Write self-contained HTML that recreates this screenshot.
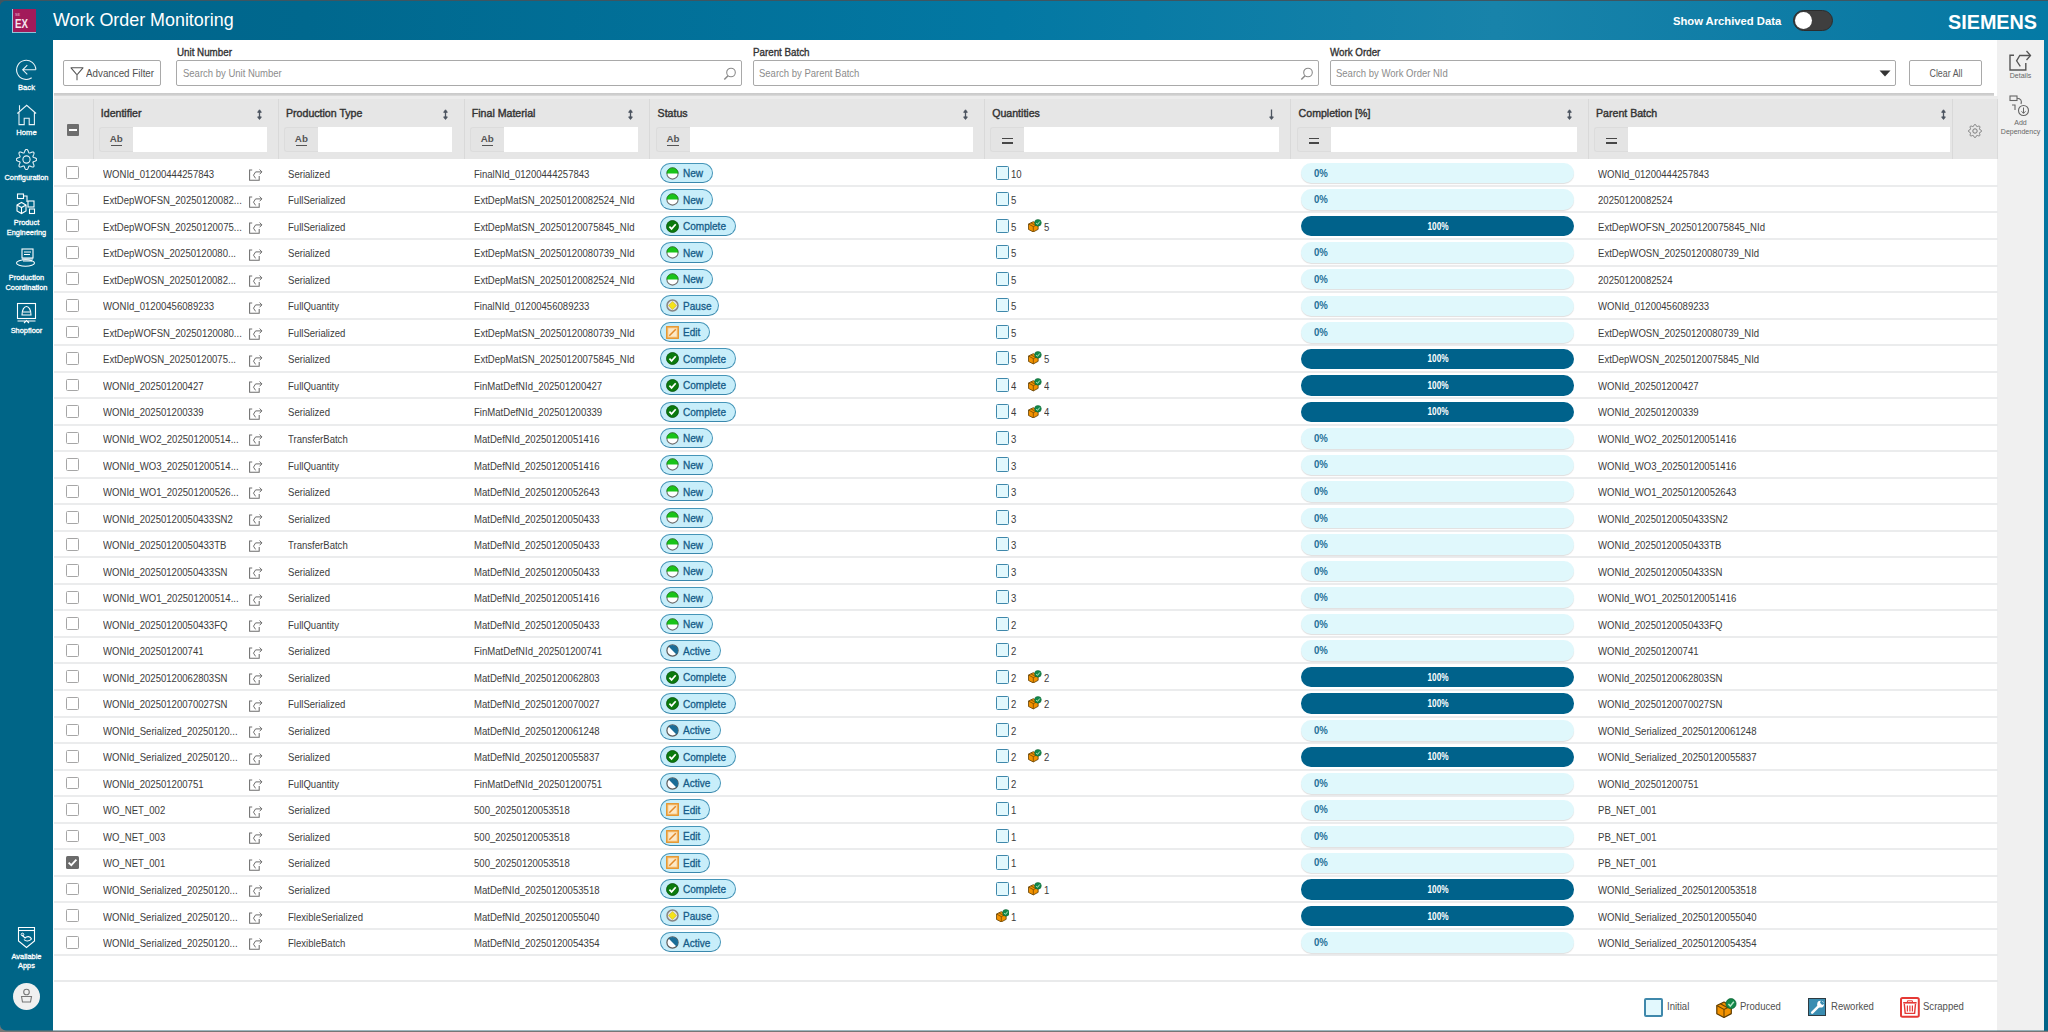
<!DOCTYPE html><html><head><meta charset="utf-8"><title>Work Order Monitoring</title><style>
*{margin:0;padding:0;box-sizing:border-box}
html,body{width:2048px;height:1032px;overflow:hidden;background:linear-gradient(180deg,#3f5560 0px,#3f5560 3px,#767676 1020px);font-family:"Liberation Sans", sans-serif}
.a{position:absolute;display:block}
.t{position:absolute;white-space:nowrap;line-height:1.117;font-family:"Liberation Sans", sans-serif}
#app{position:absolute;left:0;top:0;width:2048px;height:1032px;background:#006587;clip-path:inset(1px 0 1.5px 0 round 6px 0 0 6px);overflow:hidden}
</style></head><body><div id="app"><div class="a" style="left:0.00px;top:0.00px;width:2048.00px;height:40.30px;background:linear-gradient(90deg,#00648b 0%,#00688e 15%,#0378a3 49%,#1883aa 73%,#0b7aa4 92%,#047aa5 100%)"></div><div class="a" style="left:12.20px;top:9.20px;width:23.60px;height:24.20px;background:#a21a5a;border-left:1.2px solid #9ccbe0;border-bottom:1.2px solid #8fc2d8"></div><div class="t" style="left:15.20px;top:17.02px;font-size:12.8px;font-weight:700;color:#f6e6ee;transform:scaleX(0.76);transform-origin:0 0;">EX</div><div class="t" style="left:15.00px;top:13.16px;font-size:3.8px;font-weight:700;color:#d890b0;">SE</div><div class="t" style="left:53.00px;top:10.10px;font-size:17.9px;font-weight:400;color:#ffffff;">Work Order Monitoring</div><div class="t" style="left:1672.90px;top:15.42px;font-size:11.25px;font-weight:700;color:#ffffff;">Show Archived Data</div><div class="a" style="left:1792.60px;top:10.40px;width:40.00px;height:21.00px;background:#3f3f3f;border-radius:11px;border:1px solid #2c2c2c"></div><div class="a" style="left:1794.60px;top:12.40px;width:17.00px;height:17.00px;background:#ffffff;border-radius:50%"></div><div class="t" style="left:1948.00px;top:11.48px;font-size:19.8px;font-weight:700;color:#ffffff;">SIEMENS</div><div class="a" style="left:53.00px;top:40.30px;width:1944.00px;height:991.00px;background:#ffffff"></div><div class="a" style="left:1997.00px;top:40.30px;width:46.60px;height:991.00px;background:#f0f0f0"></div><div class="a" style="left:2043.60px;top:40.30px;width:4.40px;height:991.00px;background:linear-gradient(180deg,#0479a6 0%,#037096 45%,#006387 100%)"></div><svg class="a" style="left:16.00px;top:59.00px;" width="21" height="21" viewBox="0 0 21 21"><path d="M19.8 10.8 A9.6 9.6 0 1 0 15.7 18.7" fill="none" stroke="#e8f2f6" stroke-width="1.1"/><path d="M6.7 10.8 H19.8 M11.3 6.2 L6.7 10.8 L11.3 15.4" fill="none" stroke="#e8f2f6" stroke-width="1.1"/></svg><div class="t" style="left:-3.50px;width:60px;text-align:center;top:83.82px;font-size:7.6000000000000005px;font-weight:400;color:#ffffff;-webkit-text-stroke:0.3px #ffffff">Back</div><svg class="a" style="left:16.00px;top:104.00px;" width="21" height="22" viewBox="0 0 21 22"><path d="M1.3 9.5 L10.7 1.3 L20.1 9.5 M3 8 V20.6 H8.2 V14.2 H13.2 V20.6 H18.4 V8" fill="none" stroke="#e8f2f6" stroke-width="1.1"/><path d="M3.5 1.2 V6.5" stroke="#e8f2f6" stroke-width="1.1"/></svg><div class="t" style="left:-3.50px;width:60px;text-align:center;top:129.02px;font-size:7.6000000000000005px;font-weight:400;color:#ffffff;-webkit-text-stroke:0.3px #ffffff">Home</div><svg class="a" style="left:16.00px;top:149.40px;" width="21" height="21" viewBox="0 0 21 21"><polygon points="20.70,10.50 20.55,11.03 20.12,11.51 19.48,11.92 18.75,12.25 18.03,12.52 17.45,12.76 17.07,13.02 16.93,13.36 17.01,13.82 17.25,14.40 17.57,15.09 17.86,15.85 18.02,16.59 17.98,17.23 17.71,17.71 17.23,17.98 16.59,18.02 15.85,17.86 15.09,17.57 14.40,17.25 13.82,17.01 13.36,16.93 13.02,17.07 12.76,17.45 12.52,18.03 12.25,18.75 11.92,19.48 11.51,20.12 11.03,20.55 10.50,20.70 9.97,20.55 9.49,20.12 9.08,19.48 8.75,18.75 8.48,18.03 8.24,17.45 7.98,17.07 7.64,16.93 7.18,17.01 6.60,17.25 5.91,17.57 5.15,17.86 4.41,18.02 3.77,17.98 3.29,17.71 3.02,17.23 2.98,16.59 3.14,15.85 3.43,15.09 3.75,14.40 3.99,13.82 4.07,13.36 3.93,13.02 3.55,12.76 2.97,12.52 2.25,12.25 1.52,11.92 0.88,11.51 0.45,11.03 0.30,10.50 0.45,9.97 0.88,9.49 1.52,9.08 2.25,8.75 2.97,8.48 3.55,8.24 3.93,7.98 4.07,7.64 3.99,7.18 3.75,6.60 3.43,5.91 3.14,5.15 2.98,4.41 3.02,3.77 3.29,3.29 3.77,3.02 4.41,2.98 5.15,3.14 5.91,3.43 6.60,3.75 7.18,3.99 7.64,4.07 7.98,3.93 8.24,3.55 8.48,2.97 8.75,2.25 9.08,1.52 9.49,0.88 9.97,0.45 10.50,0.30 11.03,0.45 11.51,0.88 11.92,1.52 12.25,2.25 12.52,2.97 12.76,3.55 13.02,3.93 13.36,4.07 13.82,3.99 14.40,3.75 15.09,3.43 15.85,3.14 16.59,2.98 17.23,3.02 17.71,3.29 17.98,3.77 18.02,4.41 17.86,5.15 17.57,5.91 17.25,6.60 17.01,7.18 16.93,7.64 17.07,7.98 17.45,8.24 18.03,8.48 18.75,8.75 19.48,9.08 20.12,9.49 20.55,9.97" fill="none" stroke="#e8f2f6" stroke-width="1.1" stroke-linejoin="round"/><circle cx="10.5" cy="10.5" r="3.6" fill="none" stroke="#e8f2f6" stroke-width="1.1"/></svg><div class="t" style="left:-3.50px;width:60px;text-align:center;top:174.00px;font-size:7.4px;font-weight:400;color:#ffffff;-webkit-text-stroke:0.3px #ffffff">Configuration</div><svg class="a" style="left:15.00px;top:193.00px;" width="22" height="22" viewBox="0 0 22 22"><rect x="2.5" y="1" width="6" height="4.5" fill="none" stroke="#fff" stroke-width="1.1"/><path d="M8.5 3 H12 V9" fill="none" stroke="#fff" stroke-width="1.1"/><path d="M2 12 L6.5 9.5 L11 12 V18 L6.5 20.5 L2 18 Z M2 12 L6.5 14.5 L11 12 M6.5 14.5 V20.5" fill="none" stroke="#fff" stroke-width="1.1"/><rect x="13" y="8" width="6" height="6" fill="none" stroke="#fff" stroke-width="1.1"/><rect x="14.5" y="16" width="5" height="4.5" fill="none" stroke="#fff" stroke-width="1.1"/></svg><div class="t" style="left:-3.50px;width:60px;text-align:center;top:218.80px;font-size:7.4px;font-weight:400;color:#ffffff;-webkit-text-stroke:0.3px #ffffff">Product</div><div class="t" style="left:-3.50px;width:60px;text-align:center;top:228.90px;font-size:7.4px;font-weight:400;color:#ffffff;-webkit-text-stroke:0.3px #ffffff">Engineering</div><svg class="a" style="left:15.00px;top:248.00px;" width="22" height="20" viewBox="0 0 22 20"><rect x="7" y="1" width="11" height="9" fill="none" stroke="#fff" stroke-width="1.1"/><path d="M9 4 H16 M9 6.5 H15" stroke="#fff" stroke-width="1"/><ellipse cx="10.5" cy="15" rx="9" ry="3.2" fill="none" stroke="#fff" stroke-width="1.1"/><path d="M7 11 H18 M8 13 H17" stroke="#fff" stroke-width="1.1"/></svg><div class="t" style="left:-3.50px;width:60px;text-align:center;top:273.80px;font-size:7.4px;font-weight:400;color:#ffffff;-webkit-text-stroke:0.3px #ffffff">Production</div><div class="t" style="left:-3.50px;width:60px;text-align:center;top:283.90px;font-size:7.4px;font-weight:400;color:#ffffff;-webkit-text-stroke:0.3px #ffffff">Coordination</div><svg class="a" style="left:16.00px;top:302.00px;" width="21" height="22" viewBox="0 0 21 22"><rect x="1.5" y="1.5" width="18" height="15" fill="none" stroke="#fff" stroke-width="1.1"/><path d="M6 13 C6 8 8 4.5 10.5 4.5 C13 4.5 15 8 15 13 Z" fill="none" stroke="#fff" stroke-width="1.1"/><path d="M7 10 H14 M1.5 19 H19.5 M8 21 L10.5 18.5 L13 21" stroke="#fff" stroke-width="1.1" fill="none"/></svg><div class="t" style="left:-3.50px;width:60px;text-align:center;top:327.30px;font-size:7.4px;font-weight:400;color:#ffffff;-webkit-text-stroke:0.3px #ffffff">Shopfloor</div><svg class="a" style="left:16.00px;top:926.00px;" width="21" height="23" viewBox="0 0 21 23"><path d="M2.5 1.5 H18.5 V15 L10.5 21.5 L2.5 15 Z" fill="none" stroke="#fff" stroke-width="1.1"/><path d="M2.5 4.5 H18.5" stroke="#fff" stroke-width="1.1"/><path d="M6 9 L9 12 C11 10 14 10 15.5 13 C13.5 15.5 9.5 15.5 8 13.5" fill="none" stroke="#fff" stroke-width="1.1"/><circle cx="6.5" cy="8.5" r="1.3" fill="none" stroke="#fff" stroke-width="1"/></svg><div class="t" style="left:-3.50px;width:60px;text-align:center;top:952.80px;font-size:7.4px;font-weight:400;color:#ffffff;-webkit-text-stroke:0.3px #ffffff">Available</div><div class="t" style="left:-3.50px;width:60px;text-align:center;top:962.30px;font-size:7.4px;font-weight:400;color:#ffffff;-webkit-text-stroke:0.3px #ffffff">Apps</div><div class="a" style="left:12.90px;top:982.50px;width:27.40px;height:27.40px;background:#f0f0f0;border-radius:50%"></div><svg class="a" style="left:18.00px;top:987.00px;" width="17" height="17" viewBox="0 0 17 17"><circle cx="8.5" cy="5" r="2.8" fill="none" stroke="#777" stroke-width="1.1"/><path d="M3.5 9.5 H13.5 L12.5 15 H4.5 Z" fill="none" stroke="#777" stroke-width="1.1"/></svg><div class="a" style="left:63.00px;top:60.00px;width:98.00px;height:26.00px;background:#fff;border:1.8px solid #a9a9a9;border-radius:2px"></div><svg class="a" style="left:70.00px;top:66.00px;" width="14" height="15" viewBox="0 0 14 15"><path d="M1 1.8 H13 L7.6 8.2 Q7 8.8 6.4 8.2 Z M7 8.5 V14.2" fill="none" stroke="#555" stroke-width="1.05" stroke-linejoin="round"/></svg><div class="t" style="left:86.30px;top:67.50px;font-size:10.5px;font-weight:400;color:#505050;transform:scaleX(0.933);transform-origin:0 0;">Advanced Filter</div><div class="t" style="left:176.50px;top:47.38px;font-size:10.3px;font-weight:400;color:#333333;transform:scaleX(0.95);transform-origin:0 0;-webkit-text-stroke:0.35px #333333">Unit Number</div><div class="a" style="left:176.00px;top:60.40px;width:566.00px;height:25.40px;background:#fff;border:1.8px solid #a9a9a9;border-radius:2px"></div><div class="t" style="left:182.50px;top:67.88px;font-size:10.3px;font-weight:400;color:#8c8c8c;transform:scaleX(0.923);transform-origin:0 0;">Search by Unit Number</div><svg class="a" style="left:723.00px;top:66.50px;" width="14" height="14" viewBox="0 0 14 14"><circle cx="8" cy="5.5" r="4.3" fill="none" stroke="#8a8a8a" stroke-width="1.1"/><path d="M5 8.7 L1.3 12.5" stroke="#8a8a8a" stroke-width="1.5"/></svg><div class="t" style="left:753.00px;top:47.38px;font-size:10.3px;font-weight:400;color:#333333;transform:scaleX(0.95);transform-origin:0 0;-webkit-text-stroke:0.35px #333333">Parent Batch</div><div class="a" style="left:752.50px;top:60.40px;width:566.20px;height:25.40px;background:#fff;border:1.8px solid #a9a9a9;border-radius:2px"></div><div class="t" style="left:759.00px;top:67.88px;font-size:10.3px;font-weight:400;color:#8c8c8c;transform:scaleX(0.923);transform-origin:0 0;">Search by Parent Batch</div><svg class="a" style="left:1299.70px;top:66.50px;" width="14" height="14" viewBox="0 0 14 14"><circle cx="8" cy="5.5" r="4.3" fill="none" stroke="#8a8a8a" stroke-width="1.1"/><path d="M5 8.7 L1.3 12.5" stroke="#8a8a8a" stroke-width="1.5"/></svg><div class="t" style="left:1330.00px;top:47.38px;font-size:10.3px;font-weight:400;color:#333333;transform:scaleX(0.95);transform-origin:0 0;-webkit-text-stroke:0.35px #333333">Work Order</div><div class="a" style="left:1329.50px;top:60.40px;width:566.50px;height:25.40px;background:#fff;border:1.8px solid #a9a9a9;border-radius:2px"></div><div class="t" style="left:1336.00px;top:67.88px;font-size:10.3px;font-weight:400;color:#8c8c8c;transform:scaleX(0.923);transform-origin:0 0;">Search by Work Order NId</div><svg class="a" style="left:1879.00px;top:70.00px;" width="12" height="7" viewBox="0 0 12 7"><path d="M0.5 0.5 H11.5 L6 6.5 Z" fill="#333"/></svg><div class="a" style="left:1909.40px;top:60.40px;width:72.60px;height:25.40px;background:#fff;border:1.8px solid #a9a9a9;border-radius:2px"></div><div class="t" style="left:1905.70px;width:80px;text-align:center;top:68.08px;font-size:10.3px;font-weight:400;color:#5a5a5a;transform:scaleX(0.86);transform-origin:50% 0;">Clear All</div><div class="a" style="left:54.00px;top:93.00px;width:1940.00px;height:3.00px;background:linear-gradient(180deg,#c9c9c9 0%,#cfcfcf 60%,#dedede 100%)"></div><div class="a" style="left:53.50px;top:96.00px;width:1944.00px;height:3.00px;background:#ececec"></div><div class="a" style="left:53.50px;top:99.00px;width:1944.00px;height:60.40px;background:#e6e6e6"></div><div class="a" style="left:1996.50px;top:99.00px;width:1.00px;height:60.40px;background:#dadada"></div><div class="a" style="left:66.70px;top:124.00px;width:12.40px;height:12.20px;background:#6e6e6e;border-radius:1px"></div><div class="a" style="left:69.00px;top:129.00px;width:8.00px;height:2.40px;background:#ffffff"></div><div class="a" style="left:92.50px;top:99.00px;width:1.00px;height:60.40px;background:#d9d9d9"></div><div class="a" style="left:277.70px;top:99.00px;width:1.00px;height:60.40px;background:#d9d9d9"></div><div class="t" style="left:100.80px;top:108.21px;font-size:10.6px;font-weight:400;color:#333333;-webkit-text-stroke:0.4px #333333">Identifier</div><svg class="a" style="left:256.70px;top:108.70px;" width="5" height="11.2" viewBox="0 0 5 11.2"><path d="M2.5 2.6 V8.6" stroke="#4d5560" stroke-width="1.3"/><path d="M0.7 3.3 L2.5 0.8 L4.3 3.3 Z M0.7 7.9 L2.5 10.4 L4.3 7.9 Z" fill="#4d5560" stroke="#4d5560" stroke-width="1" stroke-linejoin="round"/></svg><div class="a" style="left:99.00px;top:126.50px;width:34.00px;height:25.00px;background:#e4e4e4;border:1px solid #dcdcdc;border-right:none;border-radius:3px 0 0 3px"></div><div class="a" style="left:133.00px;top:126.50px;width:133.70px;height:25.00px;background:#ffffff"></div><div class="t" style="left:101.20px;width:30px;text-align:center;top:134.13px;font-size:9.8px;font-weight:700;color:#555555;">Ab</div><div class="a" style="left:110.60px;top:144.80px;width:11.50px;height:1.40px;background:#555555"></div><div class="a" style="left:463.50px;top:99.00px;width:1.00px;height:60.40px;background:#d9d9d9"></div><div class="t" style="left:286.00px;top:108.21px;font-size:10.6px;font-weight:400;color:#333333;-webkit-text-stroke:0.4px #333333">Production Type</div><svg class="a" style="left:442.50px;top:108.70px;" width="5" height="11.2" viewBox="0 0 5 11.2"><path d="M2.5 2.6 V8.6" stroke="#4d5560" stroke-width="1.3"/><path d="M0.7 3.3 L2.5 0.8 L4.3 3.3 Z M0.7 7.9 L2.5 10.4 L4.3 7.9 Z" fill="#4d5560" stroke="#4d5560" stroke-width="1" stroke-linejoin="round"/></svg><div class="a" style="left:284.20px;top:126.50px;width:34.00px;height:25.00px;background:#e4e4e4;border:1px solid #dcdcdc;border-right:none;border-radius:3px 0 0 3px"></div><div class="a" style="left:318.20px;top:126.50px;width:134.30px;height:25.00px;background:#ffffff"></div><div class="t" style="left:286.40px;width:30px;text-align:center;top:134.13px;font-size:9.8px;font-weight:700;color:#555555;">Ab</div><div class="a" style="left:295.80px;top:144.80px;width:11.50px;height:1.40px;background:#555555"></div><div class="a" style="left:649.30px;top:99.00px;width:1.00px;height:60.40px;background:#d9d9d9"></div><div class="t" style="left:471.80px;top:108.21px;font-size:10.6px;font-weight:400;color:#333333;-webkit-text-stroke:0.4px #333333">Final Material</div><svg class="a" style="left:628.30px;top:108.70px;" width="5" height="11.2" viewBox="0 0 5 11.2"><path d="M2.5 2.6 V8.6" stroke="#4d5560" stroke-width="1.3"/><path d="M0.7 3.3 L2.5 0.8 L4.3 3.3 Z M0.7 7.9 L2.5 10.4 L4.3 7.9 Z" fill="#4d5560" stroke="#4d5560" stroke-width="1" stroke-linejoin="round"/></svg><div class="a" style="left:470.00px;top:126.50px;width:34.00px;height:25.00px;background:#e4e4e4;border:1px solid #dcdcdc;border-right:none;border-radius:3px 0 0 3px"></div><div class="a" style="left:504.00px;top:126.50px;width:134.30px;height:25.00px;background:#ffffff"></div><div class="t" style="left:472.20px;width:30px;text-align:center;top:134.13px;font-size:9.8px;font-weight:700;color:#555555;">Ab</div><div class="a" style="left:481.60px;top:144.80px;width:11.50px;height:1.40px;background:#555555"></div><div class="a" style="left:983.90px;top:99.00px;width:1.00px;height:60.40px;background:#d9d9d9"></div><div class="t" style="left:657.60px;top:108.21px;font-size:10.6px;font-weight:400;color:#333333;-webkit-text-stroke:0.4px #333333">Status</div><svg class="a" style="left:962.90px;top:108.70px;" width="5" height="11.2" viewBox="0 0 5 11.2"><path d="M2.5 2.6 V8.6" stroke="#4d5560" stroke-width="1.3"/><path d="M0.7 3.3 L2.5 0.8 L4.3 3.3 Z M0.7 7.9 L2.5 10.4 L4.3 7.9 Z" fill="#4d5560" stroke="#4d5560" stroke-width="1" stroke-linejoin="round"/></svg><div class="a" style="left:655.80px;top:126.50px;width:34.00px;height:25.00px;background:#e4e4e4;border:1px solid #dcdcdc;border-right:none;border-radius:3px 0 0 3px"></div><div class="a" style="left:689.80px;top:126.50px;width:283.10px;height:25.00px;background:#ffffff"></div><div class="t" style="left:658.00px;width:30px;text-align:center;top:134.13px;font-size:9.8px;font-weight:700;color:#555555;">Ab</div><div class="a" style="left:667.40px;top:144.80px;width:11.50px;height:1.40px;background:#555555"></div><div class="a" style="left:1290.30px;top:99.00px;width:1.00px;height:60.40px;background:#d9d9d9"></div><div class="t" style="left:992.20px;top:108.21px;font-size:10.6px;font-weight:400;color:#333333;-webkit-text-stroke:0.4px #333333">Quantities</div><svg class="a" style="left:1269.30px;top:108.70px;" width="5" height="11.2" viewBox="0 0 5 11.2"><path d="M2.5 0.6 V8.6" stroke="#4d5560" stroke-width="1.3"/><path d="M0.7 7.9 L2.5 10.4 L4.3 7.9 Z" fill="#4d5560" stroke="#4d5560" stroke-width="1" stroke-linejoin="round"/></svg><div class="a" style="left:990.40px;top:126.50px;width:34.00px;height:25.00px;background:#e4e4e4;border:1px solid #dcdcdc;border-right:none;border-radius:3px 0 0 3px"></div><div class="a" style="left:1024.40px;top:126.50px;width:254.90px;height:25.00px;background:#ffffff"></div><div class="a" style="left:1002.20px;top:137.60px;width:10.80px;height:1.60px;background:#474747"></div><div class="a" style="left:1002.20px;top:142.40px;width:10.80px;height:1.60px;background:#474747"></div><div class="a" style="left:1587.70px;top:99.00px;width:1.00px;height:60.40px;background:#d9d9d9"></div><div class="t" style="left:1298.60px;top:108.21px;font-size:10.6px;font-weight:400;color:#333333;-webkit-text-stroke:0.4px #333333">Completion [%]</div><svg class="a" style="left:1566.70px;top:108.70px;" width="5" height="11.2" viewBox="0 0 5 11.2"><path d="M2.5 2.6 V8.6" stroke="#4d5560" stroke-width="1.3"/><path d="M0.7 3.3 L2.5 0.8 L4.3 3.3 Z M0.7 7.9 L2.5 10.4 L4.3 7.9 Z" fill="#4d5560" stroke="#4d5560" stroke-width="1" stroke-linejoin="round"/></svg><div class="a" style="left:1296.80px;top:126.50px;width:34.00px;height:25.00px;background:#e4e4e4;border:1px solid #dcdcdc;border-right:none;border-radius:3px 0 0 3px"></div><div class="a" style="left:1330.80px;top:126.50px;width:245.90px;height:25.00px;background:#ffffff"></div><div class="a" style="left:1308.60px;top:137.60px;width:10.80px;height:1.60px;background:#474747"></div><div class="a" style="left:1308.60px;top:142.40px;width:10.80px;height:1.60px;background:#474747"></div><div class="a" style="left:1951.70px;top:99.00px;width:1.00px;height:60.40px;background:#d9d9d9"></div><div class="t" style="left:1596.00px;top:108.21px;font-size:10.6px;font-weight:400;color:#333333;-webkit-text-stroke:0.4px #333333">Parent Batch</div><svg class="a" style="left:1940.90px;top:108.70px;" width="5" height="11.2" viewBox="0 0 5 11.2"><path d="M2.5 2.6 V8.6" stroke="#4d5560" stroke-width="1.3"/><path d="M0.7 3.3 L2.5 0.8 L4.3 3.3 Z M0.7 7.9 L2.5 10.4 L4.3 7.9 Z" fill="#4d5560" stroke="#4d5560" stroke-width="1" stroke-linejoin="round"/></svg><div class="a" style="left:1594.20px;top:126.50px;width:34.00px;height:25.00px;background:#e4e4e4;border:1px solid #dcdcdc;border-right:none;border-radius:3px 0 0 3px"></div><div class="a" style="left:1628.20px;top:126.50px;width:322.30px;height:25.00px;background:#ffffff"></div><div class="a" style="left:1606.00px;top:137.60px;width:10.80px;height:1.60px;background:#474747"></div><div class="a" style="left:1606.00px;top:142.40px;width:10.80px;height:1.60px;background:#474747"></div><svg class="a" style="left:1968.00px;top:123.60px;" width="14" height="14" viewBox="0 0 14 14"><polygon points="13.60,7.00 13.47,7.42 13.10,7.80 12.59,8.11 12.07,8.36 11.66,8.58 11.43,8.84 11.41,9.18 11.55,9.62 11.74,10.17 11.88,10.74 11.87,11.27 11.67,11.67 11.27,11.87 10.74,11.88 10.17,11.74 9.62,11.55 9.18,11.41 8.84,11.43 8.58,11.66 8.36,12.07 8.11,12.59 7.80,13.10 7.42,13.47 7.00,13.60 6.58,13.47 6.20,13.10 5.89,12.59 5.64,12.07 5.42,11.66 5.16,11.43 4.82,11.41 4.38,11.55 3.83,11.74 3.26,11.88 2.73,11.87 2.33,11.67 2.13,11.27 2.12,10.74 2.26,10.17 2.45,9.62 2.59,9.18 2.57,8.84 2.34,8.58 1.93,8.36 1.41,8.11 0.90,7.80 0.53,7.42 0.40,7.00 0.53,6.58 0.90,6.20 1.41,5.89 1.93,5.64 2.34,5.42 2.57,5.16 2.59,4.82 2.45,4.38 2.26,3.83 2.12,3.26 2.13,2.73 2.33,2.33 2.73,2.13 3.26,2.12 3.83,2.26 4.37,2.45 4.82,2.59 5.16,2.57 5.42,2.34 5.64,1.93 5.89,1.41 6.20,0.90 6.58,0.53 7.00,0.40 7.42,0.53 7.80,0.90 8.11,1.41 8.36,1.93 8.58,2.34 8.84,2.57 9.18,2.59 9.62,2.45 10.17,2.26 10.74,2.12 11.27,2.13 11.67,2.33 11.87,2.73 11.88,3.26 11.74,3.83 11.55,4.37 11.41,4.82 11.43,5.16 11.66,5.42 12.07,5.64 12.59,5.89 13.10,6.20 13.47,6.58" fill="none" stroke="#7a7a7a" stroke-width="1" stroke-linejoin="round"/><circle cx="7" cy="7" r="2.2" fill="none" stroke="#7a7a7a" stroke-width="1"/></svg><div class="a" style="left:53.50px;top:185.00px;width:1944.00px;height:2.00px;background:#ebeced"></div><div class="a" style="left:66.30px;top:166.37px;width:12.80px;height:12.80px;background:#fff;border:1.2px solid #a6a6a6;border-radius:1.5px"></div><div class="t" style="left:102.50px;top:167.69px;font-size:10.8px;font-weight:400;color:#3c3c3c;transform:scaleX(0.886);transform-origin:0 0;">WONId_01200444257843</div><svg class="a" style="left:248.60px;top:168.07px;" width="14" height="13" viewBox="0 0 14 13"><path d="M3.2 1.9 H0.6 V12.3 H10.2 V8" fill="none" stroke="#6e6e6e" stroke-width="1.05"/><path d="M6.6 10.4 L4.5 7.2 L6.6 3.9 H12.8" fill="none" stroke="#6e6e6e" stroke-width="1"/><path d="M10.6 1.5 L12.9 3.9 L10.6 6.3" fill="none" stroke="#6e6e6e" stroke-width="1"/></svg><div class="t" style="left:288.00px;top:167.69px;font-size:10.8px;font-weight:400;color:#3c3c3c;transform:scaleX(0.886);transform-origin:0 0;">Serialized</div><div class="t" style="left:474.00px;top:167.69px;font-size:10.8px;font-weight:400;color:#3c3c3c;transform:scaleX(0.886);transform-origin:0 0;">FinalNId_01200444257843</div><div class="a" style="left:659.80px;top:162.77px;width:53.60px;height:20.30px;background:#c8eefa;border:1.2px solid #4595b8;border-bottom:1.8px solid #3a88ad;border-radius:10.5px"></div><svg class="a" style="left:666.30px;top:166.57px;" width="13" height="13" viewBox="0 0 13 13"><circle cx="6.5" cy="6.5" r="5.6" fill="#fff" stroke="#6f6f6f" stroke-width="1.1"/><path d="M0.9 6.5 A5.6 5.6 0 0 1 12.1 6.5 Z" fill="#19c419"/><path d="M0.9 6.5 A5.6 5.6 0 0 1 12.1 6.5" fill="none" stroke="#119011" stroke-width="0.8"/></svg><div class="t" style="left:682.50px;top:168.18px;font-size:10.7px;font-weight:400;color:#155c88;transform:scaleX(0.94);transform-origin:0 0;-webkit-text-stroke:0.3px #155c88">New</div><div class="a" style="left:995.50px;top:165.57px;width:13.40px;height:14.20px;background:#e2f8fd;border:1.7px solid #3f88ab;border-radius:1.5px"></div><div class="t" style="left:1010.60px;top:167.69px;font-size:10.8px;font-weight:400;color:#3c3c3c;transform:scaleX(0.886);transform-origin:0 0;">10</div><div class="a" style="left:1301.00px;top:162.87px;width:273.20px;height:20.50px;background:#e0f8fc;border-radius:10.25px;box-shadow:0 1px 1px rgba(0,0,0,0.13)"></div><div class="t" style="left:1314.20px;top:167.63px;font-size:10.2px;font-weight:700;color:#1f6f97;transform:scaleX(0.94);transform-origin:0 0;">0%</div><div class="t" style="left:1597.80px;top:167.69px;font-size:10.8px;font-weight:400;color:#3c3c3c;transform:scaleX(0.886);transform-origin:0 0;">WONId_01200444257843</div><div class="a" style="left:53.50px;top:211.00px;width:1944.00px;height:2.00px;background:#ebeced"></div><div class="a" style="left:66.30px;top:192.89px;width:12.80px;height:12.80px;background:#fff;border:1.2px solid #a6a6a6;border-radius:1.5px"></div><div class="t" style="left:102.50px;top:194.22px;font-size:10.8px;font-weight:400;color:#3c3c3c;transform:scaleX(0.886);transform-origin:0 0;">ExtDepWOFSN_20250120082...</div><svg class="a" style="left:248.60px;top:194.59px;" width="14" height="13" viewBox="0 0 14 13"><path d="M3.2 1.9 H0.6 V12.3 H10.2 V8" fill="none" stroke="#6e6e6e" stroke-width="1.05"/><path d="M6.6 10.4 L4.5 7.2 L6.6 3.9 H12.8" fill="none" stroke="#6e6e6e" stroke-width="1"/><path d="M10.6 1.5 L12.9 3.9 L10.6 6.3" fill="none" stroke="#6e6e6e" stroke-width="1"/></svg><div class="t" style="left:288.00px;top:194.22px;font-size:10.8px;font-weight:400;color:#3c3c3c;transform:scaleX(0.886);transform-origin:0 0;">FullSerialized</div><div class="t" style="left:474.00px;top:194.22px;font-size:10.8px;font-weight:400;color:#3c3c3c;transform:scaleX(0.886);transform-origin:0 0;">ExtDepMatSN_20250120082524_NId</div><div class="a" style="left:659.80px;top:189.29px;width:53.60px;height:20.30px;background:#c8eefa;border:1.2px solid #4595b8;border-bottom:1.8px solid #3a88ad;border-radius:10.5px"></div><svg class="a" style="left:666.30px;top:193.09px;" width="13" height="13" viewBox="0 0 13 13"><circle cx="6.5" cy="6.5" r="5.6" fill="#fff" stroke="#6f6f6f" stroke-width="1.1"/><path d="M0.9 6.5 A5.6 5.6 0 0 1 12.1 6.5 Z" fill="#19c419"/><path d="M0.9 6.5 A5.6 5.6 0 0 1 12.1 6.5" fill="none" stroke="#119011" stroke-width="0.8"/></svg><div class="t" style="left:682.50px;top:194.71px;font-size:10.7px;font-weight:400;color:#155c88;transform:scaleX(0.94);transform-origin:0 0;-webkit-text-stroke:0.3px #155c88">New</div><div class="a" style="left:995.50px;top:192.09px;width:13.40px;height:14.20px;background:#e2f8fd;border:1.7px solid #3f88ab;border-radius:1.5px"></div><div class="t" style="left:1010.60px;top:194.22px;font-size:10.8px;font-weight:400;color:#3c3c3c;transform:scaleX(0.886);transform-origin:0 0;">5</div><div class="a" style="left:1301.00px;top:189.39px;width:273.20px;height:20.50px;background:#e0f8fc;border-radius:10.25px;box-shadow:0 1px 1px rgba(0,0,0,0.13)"></div><div class="t" style="left:1314.20px;top:194.16px;font-size:10.2px;font-weight:700;color:#1f6f97;transform:scaleX(0.94);transform-origin:0 0;">0%</div><div class="t" style="left:1597.80px;top:194.22px;font-size:10.8px;font-weight:400;color:#3c3c3c;transform:scaleX(0.886);transform-origin:0 0;">20250120082524</div><div class="a" style="left:53.50px;top:238.00px;width:1944.00px;height:2.00px;background:#ebeced"></div><div class="a" style="left:66.30px;top:219.43px;width:12.80px;height:12.80px;background:#fff;border:1.2px solid #a6a6a6;border-radius:1.5px"></div><div class="t" style="left:102.50px;top:220.75px;font-size:10.8px;font-weight:400;color:#3c3c3c;transform:scaleX(0.886);transform-origin:0 0;">ExtDepWOFSN_20250120075...</div><svg class="a" style="left:248.60px;top:221.13px;" width="14" height="13" viewBox="0 0 14 13"><path d="M3.2 1.9 H0.6 V12.3 H10.2 V8" fill="none" stroke="#6e6e6e" stroke-width="1.05"/><path d="M6.6 10.4 L4.5 7.2 L6.6 3.9 H12.8" fill="none" stroke="#6e6e6e" stroke-width="1"/><path d="M10.6 1.5 L12.9 3.9 L10.6 6.3" fill="none" stroke="#6e6e6e" stroke-width="1"/></svg><div class="t" style="left:288.00px;top:220.75px;font-size:10.8px;font-weight:400;color:#3c3c3c;transform:scaleX(0.886);transform-origin:0 0;">FullSerialized</div><div class="t" style="left:474.00px;top:220.75px;font-size:10.8px;font-weight:400;color:#3c3c3c;transform:scaleX(0.886);transform-origin:0 0;">ExtDepMatSN_20250120075845_NId</div><div class="a" style="left:659.80px;top:215.83px;width:76.50px;height:20.30px;background:#c8eefa;border:1.2px solid #4595b8;border-bottom:1.8px solid #3a88ad;border-radius:10.5px"></div><svg class="a" style="left:666.30px;top:219.63px;" width="13" height="13" viewBox="0 0 13 13"><circle cx="6.5" cy="6.5" r="6" fill="#0b7a0e" stroke="#08520a" stroke-width="0.8"/><path d="M3.4 6.6 L5.6 8.9 L9.7 4.3" fill="none" stroke="#fff" stroke-width="1.7"/></svg><div class="t" style="left:682.50px;top:221.24px;font-size:10.7px;font-weight:400;color:#155c88;transform:scaleX(0.94);transform-origin:0 0;-webkit-text-stroke:0.3px #155c88">Complete</div><div class="a" style="left:995.50px;top:218.63px;width:13.40px;height:14.20px;background:#e2f8fd;border:1.7px solid #3f88ab;border-radius:1.5px"></div><div class="t" style="left:1010.60px;top:220.75px;font-size:10.8px;font-weight:400;color:#3c3c3c;transform:scaleX(0.886);transform-origin:0 0;">5</div><svg class="a" style="left:1028.30px;top:218.83px;" width="13.6" height="13.6" viewBox="0 0 20.5 20.5"><path d="M0.8 7.5 L8 4 L15.3 8 V15.6 L8 19.5 L0.8 15.8 Z" fill="#f39200" stroke="#5e3c00" stroke-width="1.2" stroke-linejoin="round"/><path d="M0.8 7.5 L8 11.5 L15.3 8 M8 11.5 V19.5 M4.4 5.8 L11.6 9.8" fill="none" stroke="#6a4400" stroke-width="1.1"/><circle cx="15" cy="5.7" r="5.1" fill="#13884a" stroke="#0b5e30" stroke-width="0.7"/><path d="M12.4 6 L14.3 8.1 L17.8 3.8" fill="none" stroke="#b6e6c8" stroke-width="1.5"/></svg><div class="t" style="left:1043.70px;top:220.75px;font-size:10.8px;font-weight:400;color:#3c3c3c;transform:scaleX(0.886);transform-origin:0 0;">5</div><div class="a" style="left:1301.00px;top:215.93px;width:273.20px;height:20.50px;background:#00628b;border-radius:10.25px"></div><div class="t" style="left:1407.60px;width:60px;text-align:center;top:220.78px;font-size:10px;font-weight:700;color:#ffffff;transform:scaleX(0.82);transform-origin:50% 0;">100%</div><div class="t" style="left:1597.80px;top:220.75px;font-size:10.8px;font-weight:400;color:#3c3c3c;transform:scaleX(0.886);transform-origin:0 0;">ExtDepWOFSN_20250120075845_NId</div><div class="a" style="left:53.50px;top:265.00px;width:1944.00px;height:2.00px;background:#ebeced"></div><div class="a" style="left:66.30px;top:245.95px;width:12.80px;height:12.80px;background:#fff;border:1.2px solid #a6a6a6;border-radius:1.5px"></div><div class="t" style="left:102.50px;top:247.28px;font-size:10.8px;font-weight:400;color:#3c3c3c;transform:scaleX(0.886);transform-origin:0 0;">ExtDepWOSN_20250120080...</div><svg class="a" style="left:248.60px;top:247.66px;" width="14" height="13" viewBox="0 0 14 13"><path d="M3.2 1.9 H0.6 V12.3 H10.2 V8" fill="none" stroke="#6e6e6e" stroke-width="1.05"/><path d="M6.6 10.4 L4.5 7.2 L6.6 3.9 H12.8" fill="none" stroke="#6e6e6e" stroke-width="1"/><path d="M10.6 1.5 L12.9 3.9 L10.6 6.3" fill="none" stroke="#6e6e6e" stroke-width="1"/></svg><div class="t" style="left:288.00px;top:247.28px;font-size:10.8px;font-weight:400;color:#3c3c3c;transform:scaleX(0.886);transform-origin:0 0;">Serialized</div><div class="t" style="left:474.00px;top:247.28px;font-size:10.8px;font-weight:400;color:#3c3c3c;transform:scaleX(0.886);transform-origin:0 0;">ExtDepMatSN_20250120080739_NId</div><div class="a" style="left:659.80px;top:242.35px;width:53.60px;height:20.30px;background:#c8eefa;border:1.2px solid #4595b8;border-bottom:1.8px solid #3a88ad;border-radius:10.5px"></div><svg class="a" style="left:666.30px;top:246.16px;" width="13" height="13" viewBox="0 0 13 13"><circle cx="6.5" cy="6.5" r="5.6" fill="#fff" stroke="#6f6f6f" stroke-width="1.1"/><path d="M0.9 6.5 A5.6 5.6 0 0 1 12.1 6.5 Z" fill="#19c419"/><path d="M0.9 6.5 A5.6 5.6 0 0 1 12.1 6.5" fill="none" stroke="#119011" stroke-width="0.8"/></svg><div class="t" style="left:682.50px;top:247.77px;font-size:10.7px;font-weight:400;color:#155c88;transform:scaleX(0.94);transform-origin:0 0;-webkit-text-stroke:0.3px #155c88">New</div><div class="a" style="left:995.50px;top:245.16px;width:13.40px;height:14.20px;background:#e2f8fd;border:1.7px solid #3f88ab;border-radius:1.5px"></div><div class="t" style="left:1010.60px;top:247.28px;font-size:10.8px;font-weight:400;color:#3c3c3c;transform:scaleX(0.886);transform-origin:0 0;">5</div><div class="a" style="left:1301.00px;top:242.45px;width:273.20px;height:20.50px;background:#e0f8fc;border-radius:10.25px;box-shadow:0 1px 1px rgba(0,0,0,0.13)"></div><div class="t" style="left:1314.20px;top:247.22px;font-size:10.2px;font-weight:700;color:#1f6f97;transform:scaleX(0.94);transform-origin:0 0;">0%</div><div class="t" style="left:1597.80px;top:247.28px;font-size:10.8px;font-weight:400;color:#3c3c3c;transform:scaleX(0.886);transform-origin:0 0;">ExtDepWOSN_20250120080739_NId</div><div class="a" style="left:53.50px;top:291.00px;width:1944.00px;height:2.00px;background:#ebeced"></div><div class="a" style="left:66.30px;top:272.48px;width:12.80px;height:12.80px;background:#fff;border:1.2px solid #a6a6a6;border-radius:1.5px"></div><div class="t" style="left:102.50px;top:273.81px;font-size:10.8px;font-weight:400;color:#3c3c3c;transform:scaleX(0.886);transform-origin:0 0;">ExtDepWOSN_20250120082...</div><svg class="a" style="left:248.60px;top:274.18px;" width="14" height="13" viewBox="0 0 14 13"><path d="M3.2 1.9 H0.6 V12.3 H10.2 V8" fill="none" stroke="#6e6e6e" stroke-width="1.05"/><path d="M6.6 10.4 L4.5 7.2 L6.6 3.9 H12.8" fill="none" stroke="#6e6e6e" stroke-width="1"/><path d="M10.6 1.5 L12.9 3.9 L10.6 6.3" fill="none" stroke="#6e6e6e" stroke-width="1"/></svg><div class="t" style="left:288.00px;top:273.81px;font-size:10.8px;font-weight:400;color:#3c3c3c;transform:scaleX(0.886);transform-origin:0 0;">Serialized</div><div class="t" style="left:474.00px;top:273.81px;font-size:10.8px;font-weight:400;color:#3c3c3c;transform:scaleX(0.886);transform-origin:0 0;">ExtDepMatSN_20250120082524_NId</div><div class="a" style="left:659.80px;top:268.88px;width:53.60px;height:20.30px;background:#c8eefa;border:1.2px solid #4595b8;border-bottom:1.8px solid #3a88ad;border-radius:10.5px"></div><svg class="a" style="left:666.30px;top:272.68px;" width="13" height="13" viewBox="0 0 13 13"><circle cx="6.5" cy="6.5" r="5.6" fill="#fff" stroke="#6f6f6f" stroke-width="1.1"/><path d="M0.9 6.5 A5.6 5.6 0 0 1 12.1 6.5 Z" fill="#19c419"/><path d="M0.9 6.5 A5.6 5.6 0 0 1 12.1 6.5" fill="none" stroke="#119011" stroke-width="0.8"/></svg><div class="t" style="left:682.50px;top:274.30px;font-size:10.7px;font-weight:400;color:#155c88;transform:scaleX(0.94);transform-origin:0 0;-webkit-text-stroke:0.3px #155c88">New</div><div class="a" style="left:995.50px;top:271.68px;width:13.40px;height:14.20px;background:#e2f8fd;border:1.7px solid #3f88ab;border-radius:1.5px"></div><div class="t" style="left:1010.60px;top:273.81px;font-size:10.8px;font-weight:400;color:#3c3c3c;transform:scaleX(0.886);transform-origin:0 0;">5</div><div class="a" style="left:1301.00px;top:268.98px;width:273.20px;height:20.50px;background:#e0f8fc;border-radius:10.25px;box-shadow:0 1px 1px rgba(0,0,0,0.13)"></div><div class="t" style="left:1314.20px;top:273.75px;font-size:10.2px;font-weight:700;color:#1f6f97;transform:scaleX(0.94);transform-origin:0 0;">0%</div><div class="t" style="left:1597.80px;top:273.81px;font-size:10.8px;font-weight:400;color:#3c3c3c;transform:scaleX(0.886);transform-origin:0 0;">20250120082524</div><div class="a" style="left:53.50px;top:318.00px;width:1944.00px;height:2.00px;background:#ebeced"></div><div class="a" style="left:66.30px;top:299.01px;width:12.80px;height:12.80px;background:#fff;border:1.2px solid #a6a6a6;border-radius:1.5px"></div><div class="t" style="left:102.50px;top:300.34px;font-size:10.8px;font-weight:400;color:#3c3c3c;transform:scaleX(0.886);transform-origin:0 0;">WONId_01200456089233</div><svg class="a" style="left:248.60px;top:300.71px;" width="14" height="13" viewBox="0 0 14 13"><path d="M3.2 1.9 H0.6 V12.3 H10.2 V8" fill="none" stroke="#6e6e6e" stroke-width="1.05"/><path d="M6.6 10.4 L4.5 7.2 L6.6 3.9 H12.8" fill="none" stroke="#6e6e6e" stroke-width="1"/><path d="M10.6 1.5 L12.9 3.9 L10.6 6.3" fill="none" stroke="#6e6e6e" stroke-width="1"/></svg><div class="t" style="left:288.00px;top:300.34px;font-size:10.8px;font-weight:400;color:#3c3c3c;transform:scaleX(0.886);transform-origin:0 0;">FullQuantity</div><div class="t" style="left:474.00px;top:300.34px;font-size:10.8px;font-weight:400;color:#3c3c3c;transform:scaleX(0.886);transform-origin:0 0;">FinalNId_01200456089233</div><div class="a" style="left:659.80px;top:295.42px;width:59.00px;height:20.30px;background:#c8eefa;border:1.2px solid #4595b8;border-bottom:1.8px solid #3a88ad;border-radius:10.5px"></div><svg class="a" style="left:666.30px;top:299.21px;" width="13" height="13" viewBox="0 0 13 13"><circle cx="6.5" cy="6.5" r="5.5" fill="#e2e2e2" stroke="#858585" stroke-width="1.5"/><path d="M6.5 2.6 L10.4 6.5 L6.5 10.4 L2.6 6.5 Z" fill="#f4e31a" stroke="#c8b400" stroke-width="0.5"/></svg><div class="t" style="left:682.50px;top:300.83px;font-size:10.7px;font-weight:400;color:#155c88;transform:scaleX(0.94);transform-origin:0 0;-webkit-text-stroke:0.3px #155c88">Pause</div><div class="a" style="left:995.50px;top:298.21px;width:13.40px;height:14.20px;background:#e2f8fd;border:1.7px solid #3f88ab;border-radius:1.5px"></div><div class="t" style="left:1010.60px;top:300.34px;font-size:10.8px;font-weight:400;color:#3c3c3c;transform:scaleX(0.886);transform-origin:0 0;">5</div><div class="a" style="left:1301.00px;top:295.51px;width:273.20px;height:20.50px;background:#e0f8fc;border-radius:10.25px;box-shadow:0 1px 1px rgba(0,0,0,0.13)"></div><div class="t" style="left:1314.20px;top:300.28px;font-size:10.2px;font-weight:700;color:#1f6f97;transform:scaleX(0.94);transform-origin:0 0;">0%</div><div class="t" style="left:1597.80px;top:300.34px;font-size:10.8px;font-weight:400;color:#3c3c3c;transform:scaleX(0.886);transform-origin:0 0;">WONId_01200456089233</div><div class="a" style="left:53.50px;top:344.00px;width:1944.00px;height:2.00px;background:#ebeced"></div><div class="a" style="left:66.30px;top:325.55px;width:12.80px;height:12.80px;background:#fff;border:1.2px solid #a6a6a6;border-radius:1.5px"></div><div class="t" style="left:102.50px;top:326.87px;font-size:10.8px;font-weight:400;color:#3c3c3c;transform:scaleX(0.886);transform-origin:0 0;">ExtDepWOFSN_20250120080...</div><svg class="a" style="left:248.60px;top:327.25px;" width="14" height="13" viewBox="0 0 14 13"><path d="M3.2 1.9 H0.6 V12.3 H10.2 V8" fill="none" stroke="#6e6e6e" stroke-width="1.05"/><path d="M6.6 10.4 L4.5 7.2 L6.6 3.9 H12.8" fill="none" stroke="#6e6e6e" stroke-width="1"/><path d="M10.6 1.5 L12.9 3.9 L10.6 6.3" fill="none" stroke="#6e6e6e" stroke-width="1"/></svg><div class="t" style="left:288.00px;top:326.87px;font-size:10.8px;font-weight:400;color:#3c3c3c;transform:scaleX(0.886);transform-origin:0 0;">FullSerialized</div><div class="t" style="left:474.00px;top:326.87px;font-size:10.8px;font-weight:400;color:#3c3c3c;transform:scaleX(0.886);transform-origin:0 0;">ExtDepMatSN_20250120080739_NId</div><div class="a" style="left:659.80px;top:321.95px;width:50.40px;height:20.30px;background:#c8eefa;border:1.2px solid #4595b8;border-bottom:1.8px solid #3a88ad;border-radius:10.5px"></div><svg class="a" style="left:666.30px;top:325.75px;" width="13" height="13" viewBox="0 0 13 13"><rect x="0.7" y="0.7" width="11.6" height="11.6" fill="#f6c27a" stroke="#e6962e" stroke-width="1.3"/><rect x="2.3" y="2.3" width="8.4" height="8.4" fill="#fde9c8"/><path d="M3.3 9.7 L9.8 3.2" stroke="#e28a2a" stroke-width="1.5"/></svg><div class="t" style="left:682.50px;top:327.36px;font-size:10.7px;font-weight:400;color:#155c88;transform:scaleX(0.94);transform-origin:0 0;-webkit-text-stroke:0.3px #155c88">Edit</div><div class="a" style="left:995.50px;top:324.75px;width:13.40px;height:14.20px;background:#e2f8fd;border:1.7px solid #3f88ab;border-radius:1.5px"></div><div class="t" style="left:1010.60px;top:326.87px;font-size:10.8px;font-weight:400;color:#3c3c3c;transform:scaleX(0.886);transform-origin:0 0;">5</div><div class="a" style="left:1301.00px;top:322.05px;width:273.20px;height:20.50px;background:#e0f8fc;border-radius:10.25px;box-shadow:0 1px 1px rgba(0,0,0,0.13)"></div><div class="t" style="left:1314.20px;top:326.81px;font-size:10.2px;font-weight:700;color:#1f6f97;transform:scaleX(0.94);transform-origin:0 0;">0%</div><div class="t" style="left:1597.80px;top:326.87px;font-size:10.8px;font-weight:400;color:#3c3c3c;transform:scaleX(0.886);transform-origin:0 0;">ExtDepWOSN_20250120080739_NId</div><div class="a" style="left:53.50px;top:371.00px;width:1944.00px;height:2.00px;background:#ebeced"></div><div class="a" style="left:66.30px;top:352.07px;width:12.80px;height:12.80px;background:#fff;border:1.2px solid #a6a6a6;border-radius:1.5px"></div><div class="t" style="left:102.50px;top:353.40px;font-size:10.8px;font-weight:400;color:#3c3c3c;transform:scaleX(0.886);transform-origin:0 0;">ExtDepWOSN_20250120075...</div><svg class="a" style="left:248.60px;top:353.77px;" width="14" height="13" viewBox="0 0 14 13"><path d="M3.2 1.9 H0.6 V12.3 H10.2 V8" fill="none" stroke="#6e6e6e" stroke-width="1.05"/><path d="M6.6 10.4 L4.5 7.2 L6.6 3.9 H12.8" fill="none" stroke="#6e6e6e" stroke-width="1"/><path d="M10.6 1.5 L12.9 3.9 L10.6 6.3" fill="none" stroke="#6e6e6e" stroke-width="1"/></svg><div class="t" style="left:288.00px;top:353.40px;font-size:10.8px;font-weight:400;color:#3c3c3c;transform:scaleX(0.886);transform-origin:0 0;">Serialized</div><div class="t" style="left:474.00px;top:353.40px;font-size:10.8px;font-weight:400;color:#3c3c3c;transform:scaleX(0.886);transform-origin:0 0;">ExtDepMatSN_20250120075845_NId</div><div class="a" style="left:659.80px;top:348.48px;width:76.50px;height:20.30px;background:#c8eefa;border:1.2px solid #4595b8;border-bottom:1.8px solid #3a88ad;border-radius:10.5px"></div><svg class="a" style="left:666.30px;top:352.27px;" width="13" height="13" viewBox="0 0 13 13"><circle cx="6.5" cy="6.5" r="6" fill="#0b7a0e" stroke="#08520a" stroke-width="0.8"/><path d="M3.4 6.6 L5.6 8.9 L9.7 4.3" fill="none" stroke="#fff" stroke-width="1.7"/></svg><div class="t" style="left:682.50px;top:353.89px;font-size:10.7px;font-weight:400;color:#155c88;transform:scaleX(0.94);transform-origin:0 0;-webkit-text-stroke:0.3px #155c88">Complete</div><div class="a" style="left:995.50px;top:351.27px;width:13.40px;height:14.20px;background:#e2f8fd;border:1.7px solid #3f88ab;border-radius:1.5px"></div><div class="t" style="left:1010.60px;top:353.40px;font-size:10.8px;font-weight:400;color:#3c3c3c;transform:scaleX(0.886);transform-origin:0 0;">5</div><svg class="a" style="left:1028.30px;top:351.48px;" width="13.6" height="13.6" viewBox="0 0 20.5 20.5"><path d="M0.8 7.5 L8 4 L15.3 8 V15.6 L8 19.5 L0.8 15.8 Z" fill="#f39200" stroke="#5e3c00" stroke-width="1.2" stroke-linejoin="round"/><path d="M0.8 7.5 L8 11.5 L15.3 8 M8 11.5 V19.5 M4.4 5.8 L11.6 9.8" fill="none" stroke="#6a4400" stroke-width="1.1"/><circle cx="15" cy="5.7" r="5.1" fill="#13884a" stroke="#0b5e30" stroke-width="0.7"/><path d="M12.4 6 L14.3 8.1 L17.8 3.8" fill="none" stroke="#b6e6c8" stroke-width="1.5"/></svg><div class="t" style="left:1043.70px;top:353.40px;font-size:10.8px;font-weight:400;color:#3c3c3c;transform:scaleX(0.886);transform-origin:0 0;">5</div><div class="a" style="left:1301.00px;top:348.57px;width:273.20px;height:20.50px;background:#00628b;border-radius:10.25px"></div><div class="t" style="left:1407.60px;width:60px;text-align:center;top:353.43px;font-size:10px;font-weight:700;color:#ffffff;transform:scaleX(0.82);transform-origin:50% 0;">100%</div><div class="t" style="left:1597.80px;top:353.40px;font-size:10.8px;font-weight:400;color:#3c3c3c;transform:scaleX(0.886);transform-origin:0 0;">ExtDepWOSN_20250120075845_NId</div><div class="a" style="left:53.50px;top:397.00px;width:1944.00px;height:2.00px;background:#ebeced"></div><div class="a" style="left:66.30px;top:378.60px;width:12.80px;height:12.80px;background:#fff;border:1.2px solid #a6a6a6;border-radius:1.5px"></div><div class="t" style="left:102.50px;top:379.93px;font-size:10.8px;font-weight:400;color:#3c3c3c;transform:scaleX(0.886);transform-origin:0 0;">WONId_202501200427</div><svg class="a" style="left:248.60px;top:380.30px;" width="14" height="13" viewBox="0 0 14 13"><path d="M3.2 1.9 H0.6 V12.3 H10.2 V8" fill="none" stroke="#6e6e6e" stroke-width="1.05"/><path d="M6.6 10.4 L4.5 7.2 L6.6 3.9 H12.8" fill="none" stroke="#6e6e6e" stroke-width="1"/><path d="M10.6 1.5 L12.9 3.9 L10.6 6.3" fill="none" stroke="#6e6e6e" stroke-width="1"/></svg><div class="t" style="left:288.00px;top:379.93px;font-size:10.8px;font-weight:400;color:#3c3c3c;transform:scaleX(0.886);transform-origin:0 0;">FullQuantity</div><div class="t" style="left:474.00px;top:379.93px;font-size:10.8px;font-weight:400;color:#3c3c3c;transform:scaleX(0.886);transform-origin:0 0;">FinMatDefNId_202501200427</div><div class="a" style="left:659.80px;top:375.00px;width:76.50px;height:20.30px;background:#c8eefa;border:1.2px solid #4595b8;border-bottom:1.8px solid #3a88ad;border-radius:10.5px"></div><svg class="a" style="left:666.30px;top:378.80px;" width="13" height="13" viewBox="0 0 13 13"><circle cx="6.5" cy="6.5" r="6" fill="#0b7a0e" stroke="#08520a" stroke-width="0.8"/><path d="M3.4 6.6 L5.6 8.9 L9.7 4.3" fill="none" stroke="#fff" stroke-width="1.7"/></svg><div class="t" style="left:682.50px;top:380.42px;font-size:10.7px;font-weight:400;color:#155c88;transform:scaleX(0.94);transform-origin:0 0;-webkit-text-stroke:0.3px #155c88">Complete</div><div class="a" style="left:995.50px;top:377.80px;width:13.40px;height:14.20px;background:#e2f8fd;border:1.7px solid #3f88ab;border-radius:1.5px"></div><div class="t" style="left:1010.60px;top:379.93px;font-size:10.8px;font-weight:400;color:#3c3c3c;transform:scaleX(0.886);transform-origin:0 0;">4</div><svg class="a" style="left:1028.30px;top:378.00px;" width="13.6" height="13.6" viewBox="0 0 20.5 20.5"><path d="M0.8 7.5 L8 4 L15.3 8 V15.6 L8 19.5 L0.8 15.8 Z" fill="#f39200" stroke="#5e3c00" stroke-width="1.2" stroke-linejoin="round"/><path d="M0.8 7.5 L8 11.5 L15.3 8 M8 11.5 V19.5 M4.4 5.8 L11.6 9.8" fill="none" stroke="#6a4400" stroke-width="1.1"/><circle cx="15" cy="5.7" r="5.1" fill="#13884a" stroke="#0b5e30" stroke-width="0.7"/><path d="M12.4 6 L14.3 8.1 L17.8 3.8" fill="none" stroke="#b6e6c8" stroke-width="1.5"/></svg><div class="t" style="left:1043.70px;top:379.93px;font-size:10.8px;font-weight:400;color:#3c3c3c;transform:scaleX(0.886);transform-origin:0 0;">4</div><div class="a" style="left:1301.00px;top:375.10px;width:273.20px;height:20.50px;background:#00628b;border-radius:10.25px"></div><div class="t" style="left:1407.60px;width:60px;text-align:center;top:379.95px;font-size:10px;font-weight:700;color:#ffffff;transform:scaleX(0.82);transform-origin:50% 0;">100%</div><div class="t" style="left:1597.80px;top:379.93px;font-size:10.8px;font-weight:400;color:#3c3c3c;transform:scaleX(0.886);transform-origin:0 0;">WONId_202501200427</div><div class="a" style="left:53.50px;top:424.00px;width:1944.00px;height:2.00px;background:#ebeced"></div><div class="a" style="left:66.30px;top:405.13px;width:12.80px;height:12.80px;background:#fff;border:1.2px solid #a6a6a6;border-radius:1.5px"></div><div class="t" style="left:102.50px;top:406.46px;font-size:10.8px;font-weight:400;color:#3c3c3c;transform:scaleX(0.886);transform-origin:0 0;">WONId_202501200339</div><svg class="a" style="left:248.60px;top:406.83px;" width="14" height="13" viewBox="0 0 14 13"><path d="M3.2 1.9 H0.6 V12.3 H10.2 V8" fill="none" stroke="#6e6e6e" stroke-width="1.05"/><path d="M6.6 10.4 L4.5 7.2 L6.6 3.9 H12.8" fill="none" stroke="#6e6e6e" stroke-width="1"/><path d="M10.6 1.5 L12.9 3.9 L10.6 6.3" fill="none" stroke="#6e6e6e" stroke-width="1"/></svg><div class="t" style="left:288.00px;top:406.46px;font-size:10.8px;font-weight:400;color:#3c3c3c;transform:scaleX(0.886);transform-origin:0 0;">Serialized</div><div class="t" style="left:474.00px;top:406.46px;font-size:10.8px;font-weight:400;color:#3c3c3c;transform:scaleX(0.886);transform-origin:0 0;">FinMatDefNId_202501200339</div><div class="a" style="left:659.80px;top:401.54px;width:76.50px;height:20.30px;background:#c8eefa;border:1.2px solid #4595b8;border-bottom:1.8px solid #3a88ad;border-radius:10.5px"></div><svg class="a" style="left:666.30px;top:405.33px;" width="13" height="13" viewBox="0 0 13 13"><circle cx="6.5" cy="6.5" r="6" fill="#0b7a0e" stroke="#08520a" stroke-width="0.8"/><path d="M3.4 6.6 L5.6 8.9 L9.7 4.3" fill="none" stroke="#fff" stroke-width="1.7"/></svg><div class="t" style="left:682.50px;top:406.95px;font-size:10.7px;font-weight:400;color:#155c88;transform:scaleX(0.94);transform-origin:0 0;-webkit-text-stroke:0.3px #155c88">Complete</div><div class="a" style="left:995.50px;top:404.33px;width:13.40px;height:14.20px;background:#e2f8fd;border:1.7px solid #3f88ab;border-radius:1.5px"></div><div class="t" style="left:1010.60px;top:406.46px;font-size:10.8px;font-weight:400;color:#3c3c3c;transform:scaleX(0.886);transform-origin:0 0;">4</div><svg class="a" style="left:1028.30px;top:404.54px;" width="13.6" height="13.6" viewBox="0 0 20.5 20.5"><path d="M0.8 7.5 L8 4 L15.3 8 V15.6 L8 19.5 L0.8 15.8 Z" fill="#f39200" stroke="#5e3c00" stroke-width="1.2" stroke-linejoin="round"/><path d="M0.8 7.5 L8 11.5 L15.3 8 M8 11.5 V19.5 M4.4 5.8 L11.6 9.8" fill="none" stroke="#6a4400" stroke-width="1.1"/><circle cx="15" cy="5.7" r="5.1" fill="#13884a" stroke="#0b5e30" stroke-width="0.7"/><path d="M12.4 6 L14.3 8.1 L17.8 3.8" fill="none" stroke="#b6e6c8" stroke-width="1.5"/></svg><div class="t" style="left:1043.70px;top:406.46px;font-size:10.8px;font-weight:400;color:#3c3c3c;transform:scaleX(0.886);transform-origin:0 0;">4</div><div class="a" style="left:1301.00px;top:401.63px;width:273.20px;height:20.50px;background:#00628b;border-radius:10.25px"></div><div class="t" style="left:1407.60px;width:60px;text-align:center;top:406.49px;font-size:10px;font-weight:700;color:#ffffff;transform:scaleX(0.82);transform-origin:50% 0;">100%</div><div class="t" style="left:1597.80px;top:406.46px;font-size:10.8px;font-weight:400;color:#3c3c3c;transform:scaleX(0.886);transform-origin:0 0;">WONId_202501200339</div><div class="a" style="left:53.50px;top:450.00px;width:1944.00px;height:2.00px;background:#ebeced"></div><div class="a" style="left:66.30px;top:431.67px;width:12.80px;height:12.80px;background:#fff;border:1.2px solid #a6a6a6;border-radius:1.5px"></div><div class="t" style="left:102.50px;top:432.99px;font-size:10.8px;font-weight:400;color:#3c3c3c;transform:scaleX(0.886);transform-origin:0 0;">WONId_WO2_202501200514...</div><svg class="a" style="left:248.60px;top:433.37px;" width="14" height="13" viewBox="0 0 14 13"><path d="M3.2 1.9 H0.6 V12.3 H10.2 V8" fill="none" stroke="#6e6e6e" stroke-width="1.05"/><path d="M6.6 10.4 L4.5 7.2 L6.6 3.9 H12.8" fill="none" stroke="#6e6e6e" stroke-width="1"/><path d="M10.6 1.5 L12.9 3.9 L10.6 6.3" fill="none" stroke="#6e6e6e" stroke-width="1"/></svg><div class="t" style="left:288.00px;top:432.99px;font-size:10.8px;font-weight:400;color:#3c3c3c;transform:scaleX(0.886);transform-origin:0 0;">TransferBatch</div><div class="t" style="left:474.00px;top:432.99px;font-size:10.8px;font-weight:400;color:#3c3c3c;transform:scaleX(0.886);transform-origin:0 0;">MatDefNId_20250120051416</div><div class="a" style="left:659.80px;top:428.07px;width:53.60px;height:20.30px;background:#c8eefa;border:1.2px solid #4595b8;border-bottom:1.8px solid #3a88ad;border-radius:10.5px"></div><svg class="a" style="left:666.30px;top:431.87px;" width="13" height="13" viewBox="0 0 13 13"><circle cx="6.5" cy="6.5" r="5.6" fill="#fff" stroke="#6f6f6f" stroke-width="1.1"/><path d="M0.9 6.5 A5.6 5.6 0 0 1 12.1 6.5 Z" fill="#19c419"/><path d="M0.9 6.5 A5.6 5.6 0 0 1 12.1 6.5" fill="none" stroke="#119011" stroke-width="0.8"/></svg><div class="t" style="left:682.50px;top:433.48px;font-size:10.7px;font-weight:400;color:#155c88;transform:scaleX(0.94);transform-origin:0 0;-webkit-text-stroke:0.3px #155c88">New</div><div class="a" style="left:995.50px;top:430.87px;width:13.40px;height:14.20px;background:#e2f8fd;border:1.7px solid #3f88ab;border-radius:1.5px"></div><div class="t" style="left:1010.60px;top:432.99px;font-size:10.8px;font-weight:400;color:#3c3c3c;transform:scaleX(0.886);transform-origin:0 0;">3</div><div class="a" style="left:1301.00px;top:428.17px;width:273.20px;height:20.50px;background:#e0f8fc;border-radius:10.25px;box-shadow:0 1px 1px rgba(0,0,0,0.13)"></div><div class="t" style="left:1314.20px;top:432.93px;font-size:10.2px;font-weight:700;color:#1f6f97;transform:scaleX(0.94);transform-origin:0 0;">0%</div><div class="t" style="left:1597.80px;top:432.99px;font-size:10.8px;font-weight:400;color:#3c3c3c;transform:scaleX(0.886);transform-origin:0 0;">WONId_WO2_20250120051416</div><div class="a" style="left:53.50px;top:477.00px;width:1944.00px;height:2.00px;background:#ebeced"></div><div class="a" style="left:66.30px;top:458.19px;width:12.80px;height:12.80px;background:#fff;border:1.2px solid #a6a6a6;border-radius:1.5px"></div><div class="t" style="left:102.50px;top:459.52px;font-size:10.8px;font-weight:400;color:#3c3c3c;transform:scaleX(0.886);transform-origin:0 0;">WONId_WO3_202501200514...</div><svg class="a" style="left:248.60px;top:459.89px;" width="14" height="13" viewBox="0 0 14 13"><path d="M3.2 1.9 H0.6 V12.3 H10.2 V8" fill="none" stroke="#6e6e6e" stroke-width="1.05"/><path d="M6.6 10.4 L4.5 7.2 L6.6 3.9 H12.8" fill="none" stroke="#6e6e6e" stroke-width="1"/><path d="M10.6 1.5 L12.9 3.9 L10.6 6.3" fill="none" stroke="#6e6e6e" stroke-width="1"/></svg><div class="t" style="left:288.00px;top:459.52px;font-size:10.8px;font-weight:400;color:#3c3c3c;transform:scaleX(0.886);transform-origin:0 0;">FullQuantity</div><div class="t" style="left:474.00px;top:459.52px;font-size:10.8px;font-weight:400;color:#3c3c3c;transform:scaleX(0.886);transform-origin:0 0;">MatDefNId_20250120051416</div><div class="a" style="left:659.80px;top:454.60px;width:53.60px;height:20.30px;background:#c8eefa;border:1.2px solid #4595b8;border-bottom:1.8px solid #3a88ad;border-radius:10.5px"></div><svg class="a" style="left:666.30px;top:458.39px;" width="13" height="13" viewBox="0 0 13 13"><circle cx="6.5" cy="6.5" r="5.6" fill="#fff" stroke="#6f6f6f" stroke-width="1.1"/><path d="M0.9 6.5 A5.6 5.6 0 0 1 12.1 6.5 Z" fill="#19c419"/><path d="M0.9 6.5 A5.6 5.6 0 0 1 12.1 6.5" fill="none" stroke="#119011" stroke-width="0.8"/></svg><div class="t" style="left:682.50px;top:460.01px;font-size:10.7px;font-weight:400;color:#155c88;transform:scaleX(0.94);transform-origin:0 0;-webkit-text-stroke:0.3px #155c88">New</div><div class="a" style="left:995.50px;top:457.39px;width:13.40px;height:14.20px;background:#e2f8fd;border:1.7px solid #3f88ab;border-radius:1.5px"></div><div class="t" style="left:1010.60px;top:459.52px;font-size:10.8px;font-weight:400;color:#3c3c3c;transform:scaleX(0.886);transform-origin:0 0;">3</div><div class="a" style="left:1301.00px;top:454.69px;width:273.20px;height:20.50px;background:#e0f8fc;border-radius:10.25px;box-shadow:0 1px 1px rgba(0,0,0,0.13)"></div><div class="t" style="left:1314.20px;top:459.46px;font-size:10.2px;font-weight:700;color:#1f6f97;transform:scaleX(0.94);transform-origin:0 0;">0%</div><div class="t" style="left:1597.80px;top:459.52px;font-size:10.8px;font-weight:400;color:#3c3c3c;transform:scaleX(0.886);transform-origin:0 0;">WONId_WO3_20250120051416</div><div class="a" style="left:53.50px;top:503.00px;width:1944.00px;height:2.00px;background:#ebeced"></div><div class="a" style="left:66.30px;top:484.72px;width:12.80px;height:12.80px;background:#fff;border:1.2px solid #a6a6a6;border-radius:1.5px"></div><div class="t" style="left:102.50px;top:486.05px;font-size:10.8px;font-weight:400;color:#3c3c3c;transform:scaleX(0.886);transform-origin:0 0;">WONId_WO1_202501200526...</div><svg class="a" style="left:248.60px;top:486.42px;" width="14" height="13" viewBox="0 0 14 13"><path d="M3.2 1.9 H0.6 V12.3 H10.2 V8" fill="none" stroke="#6e6e6e" stroke-width="1.05"/><path d="M6.6 10.4 L4.5 7.2 L6.6 3.9 H12.8" fill="none" stroke="#6e6e6e" stroke-width="1"/><path d="M10.6 1.5 L12.9 3.9 L10.6 6.3" fill="none" stroke="#6e6e6e" stroke-width="1"/></svg><div class="t" style="left:288.00px;top:486.05px;font-size:10.8px;font-weight:400;color:#3c3c3c;transform:scaleX(0.886);transform-origin:0 0;">Serialized</div><div class="t" style="left:474.00px;top:486.05px;font-size:10.8px;font-weight:400;color:#3c3c3c;transform:scaleX(0.886);transform-origin:0 0;">MatDefNId_20250120052643</div><div class="a" style="left:659.80px;top:481.12px;width:53.60px;height:20.30px;background:#c8eefa;border:1.2px solid #4595b8;border-bottom:1.8px solid #3a88ad;border-radius:10.5px"></div><svg class="a" style="left:666.30px;top:484.92px;" width="13" height="13" viewBox="0 0 13 13"><circle cx="6.5" cy="6.5" r="5.6" fill="#fff" stroke="#6f6f6f" stroke-width="1.1"/><path d="M0.9 6.5 A5.6 5.6 0 0 1 12.1 6.5 Z" fill="#19c419"/><path d="M0.9 6.5 A5.6 5.6 0 0 1 12.1 6.5" fill="none" stroke="#119011" stroke-width="0.8"/></svg><div class="t" style="left:682.50px;top:486.54px;font-size:10.7px;font-weight:400;color:#155c88;transform:scaleX(0.94);transform-origin:0 0;-webkit-text-stroke:0.3px #155c88">New</div><div class="a" style="left:995.50px;top:483.92px;width:13.40px;height:14.20px;background:#e2f8fd;border:1.7px solid #3f88ab;border-radius:1.5px"></div><div class="t" style="left:1010.60px;top:486.05px;font-size:10.8px;font-weight:400;color:#3c3c3c;transform:scaleX(0.886);transform-origin:0 0;">3</div><div class="a" style="left:1301.00px;top:481.22px;width:273.20px;height:20.50px;background:#e0f8fc;border-radius:10.25px;box-shadow:0 1px 1px rgba(0,0,0,0.13)"></div><div class="t" style="left:1314.20px;top:485.99px;font-size:10.2px;font-weight:700;color:#1f6f97;transform:scaleX(0.94);transform-origin:0 0;">0%</div><div class="t" style="left:1597.80px;top:486.05px;font-size:10.8px;font-weight:400;color:#3c3c3c;transform:scaleX(0.886);transform-origin:0 0;">WONId_WO1_20250120052643</div><div class="a" style="left:53.50px;top:530.00px;width:1944.00px;height:2.00px;background:#ebeced"></div><div class="a" style="left:66.30px;top:511.25px;width:12.80px;height:12.80px;background:#fff;border:1.2px solid #a6a6a6;border-radius:1.5px"></div><div class="t" style="left:102.50px;top:512.58px;font-size:10.8px;font-weight:400;color:#3c3c3c;transform:scaleX(0.886);transform-origin:0 0;">WONId_20250120050433SN2</div><svg class="a" style="left:248.60px;top:512.95px;" width="14" height="13" viewBox="0 0 14 13"><path d="M3.2 1.9 H0.6 V12.3 H10.2 V8" fill="none" stroke="#6e6e6e" stroke-width="1.05"/><path d="M6.6 10.4 L4.5 7.2 L6.6 3.9 H12.8" fill="none" stroke="#6e6e6e" stroke-width="1"/><path d="M10.6 1.5 L12.9 3.9 L10.6 6.3" fill="none" stroke="#6e6e6e" stroke-width="1"/></svg><div class="t" style="left:288.00px;top:512.58px;font-size:10.8px;font-weight:400;color:#3c3c3c;transform:scaleX(0.886);transform-origin:0 0;">Serialized</div><div class="t" style="left:474.00px;top:512.58px;font-size:10.8px;font-weight:400;color:#3c3c3c;transform:scaleX(0.886);transform-origin:0 0;">MatDefNId_20250120050433</div><div class="a" style="left:659.80px;top:507.65px;width:53.60px;height:20.30px;background:#c8eefa;border:1.2px solid #4595b8;border-bottom:1.8px solid #3a88ad;border-radius:10.5px"></div><svg class="a" style="left:666.30px;top:511.45px;" width="13" height="13" viewBox="0 0 13 13"><circle cx="6.5" cy="6.5" r="5.6" fill="#fff" stroke="#6f6f6f" stroke-width="1.1"/><path d="M0.9 6.5 A5.6 5.6 0 0 1 12.1 6.5 Z" fill="#19c419"/><path d="M0.9 6.5 A5.6 5.6 0 0 1 12.1 6.5" fill="none" stroke="#119011" stroke-width="0.8"/></svg><div class="t" style="left:682.50px;top:513.07px;font-size:10.7px;font-weight:400;color:#155c88;transform:scaleX(0.94);transform-origin:0 0;-webkit-text-stroke:0.3px #155c88">New</div><div class="a" style="left:995.50px;top:510.45px;width:13.40px;height:14.20px;background:#e2f8fd;border:1.7px solid #3f88ab;border-radius:1.5px"></div><div class="t" style="left:1010.60px;top:512.58px;font-size:10.8px;font-weight:400;color:#3c3c3c;transform:scaleX(0.886);transform-origin:0 0;">3</div><div class="a" style="left:1301.00px;top:507.75px;width:273.20px;height:20.50px;background:#e0f8fc;border-radius:10.25px;box-shadow:0 1px 1px rgba(0,0,0,0.13)"></div><div class="t" style="left:1314.20px;top:512.52px;font-size:10.2px;font-weight:700;color:#1f6f97;transform:scaleX(0.94);transform-origin:0 0;">0%</div><div class="t" style="left:1597.80px;top:512.58px;font-size:10.8px;font-weight:400;color:#3c3c3c;transform:scaleX(0.886);transform-origin:0 0;">WONId_20250120050433SN2</div><div class="a" style="left:53.50px;top:556.00px;width:1944.00px;height:2.00px;background:#ebeced"></div><div class="a" style="left:66.30px;top:537.79px;width:12.80px;height:12.80px;background:#fff;border:1.2px solid #a6a6a6;border-radius:1.5px"></div><div class="t" style="left:102.50px;top:539.11px;font-size:10.8px;font-weight:400;color:#3c3c3c;transform:scaleX(0.886);transform-origin:0 0;">WONId_20250120050433TB</div><svg class="a" style="left:248.60px;top:539.49px;" width="14" height="13" viewBox="0 0 14 13"><path d="M3.2 1.9 H0.6 V12.3 H10.2 V8" fill="none" stroke="#6e6e6e" stroke-width="1.05"/><path d="M6.6 10.4 L4.5 7.2 L6.6 3.9 H12.8" fill="none" stroke="#6e6e6e" stroke-width="1"/><path d="M10.6 1.5 L12.9 3.9 L10.6 6.3" fill="none" stroke="#6e6e6e" stroke-width="1"/></svg><div class="t" style="left:288.00px;top:539.11px;font-size:10.8px;font-weight:400;color:#3c3c3c;transform:scaleX(0.886);transform-origin:0 0;">TransferBatch</div><div class="t" style="left:474.00px;top:539.11px;font-size:10.8px;font-weight:400;color:#3c3c3c;transform:scaleX(0.886);transform-origin:0 0;">MatDefNId_20250120050433</div><div class="a" style="left:659.80px;top:534.19px;width:53.60px;height:20.30px;background:#c8eefa;border:1.2px solid #4595b8;border-bottom:1.8px solid #3a88ad;border-radius:10.5px"></div><svg class="a" style="left:666.30px;top:537.99px;" width="13" height="13" viewBox="0 0 13 13"><circle cx="6.5" cy="6.5" r="5.6" fill="#fff" stroke="#6f6f6f" stroke-width="1.1"/><path d="M0.9 6.5 A5.6 5.6 0 0 1 12.1 6.5 Z" fill="#19c419"/><path d="M0.9 6.5 A5.6 5.6 0 0 1 12.1 6.5" fill="none" stroke="#119011" stroke-width="0.8"/></svg><div class="t" style="left:682.50px;top:539.60px;font-size:10.7px;font-weight:400;color:#155c88;transform:scaleX(0.94);transform-origin:0 0;-webkit-text-stroke:0.3px #155c88">New</div><div class="a" style="left:995.50px;top:536.99px;width:13.40px;height:14.20px;background:#e2f8fd;border:1.7px solid #3f88ab;border-radius:1.5px"></div><div class="t" style="left:1010.60px;top:539.11px;font-size:10.8px;font-weight:400;color:#3c3c3c;transform:scaleX(0.886);transform-origin:0 0;">3</div><div class="a" style="left:1301.00px;top:534.29px;width:273.20px;height:20.50px;background:#e0f8fc;border-radius:10.25px;box-shadow:0 1px 1px rgba(0,0,0,0.13)"></div><div class="t" style="left:1314.20px;top:539.05px;font-size:10.2px;font-weight:700;color:#1f6f97;transform:scaleX(0.94);transform-origin:0 0;">0%</div><div class="t" style="left:1597.80px;top:539.11px;font-size:10.8px;font-weight:400;color:#3c3c3c;transform:scaleX(0.886);transform-origin:0 0;">WONId_20250120050433TB</div><div class="a" style="left:53.50px;top:583.00px;width:1944.00px;height:2.00px;background:#ebeced"></div><div class="a" style="left:66.30px;top:564.32px;width:12.80px;height:12.80px;background:#fff;border:1.2px solid #a6a6a6;border-radius:1.5px"></div><div class="t" style="left:102.50px;top:565.64px;font-size:10.8px;font-weight:400;color:#3c3c3c;transform:scaleX(0.886);transform-origin:0 0;">WONId_20250120050433SN</div><svg class="a" style="left:248.60px;top:566.01px;" width="14" height="13" viewBox="0 0 14 13"><path d="M3.2 1.9 H0.6 V12.3 H10.2 V8" fill="none" stroke="#6e6e6e" stroke-width="1.05"/><path d="M6.6 10.4 L4.5 7.2 L6.6 3.9 H12.8" fill="none" stroke="#6e6e6e" stroke-width="1"/><path d="M10.6 1.5 L12.9 3.9 L10.6 6.3" fill="none" stroke="#6e6e6e" stroke-width="1"/></svg><div class="t" style="left:288.00px;top:565.64px;font-size:10.8px;font-weight:400;color:#3c3c3c;transform:scaleX(0.886);transform-origin:0 0;">Serialized</div><div class="t" style="left:474.00px;top:565.64px;font-size:10.8px;font-weight:400;color:#3c3c3c;transform:scaleX(0.886);transform-origin:0 0;">MatDefNId_20250120050433</div><div class="a" style="left:659.80px;top:560.72px;width:53.60px;height:20.30px;background:#c8eefa;border:1.2px solid #4595b8;border-bottom:1.8px solid #3a88ad;border-radius:10.5px"></div><svg class="a" style="left:666.30px;top:564.51px;" width="13" height="13" viewBox="0 0 13 13"><circle cx="6.5" cy="6.5" r="5.6" fill="#fff" stroke="#6f6f6f" stroke-width="1.1"/><path d="M0.9 6.5 A5.6 5.6 0 0 1 12.1 6.5 Z" fill="#19c419"/><path d="M0.9 6.5 A5.6 5.6 0 0 1 12.1 6.5" fill="none" stroke="#119011" stroke-width="0.8"/></svg><div class="t" style="left:682.50px;top:566.13px;font-size:10.7px;font-weight:400;color:#155c88;transform:scaleX(0.94);transform-origin:0 0;-webkit-text-stroke:0.3px #155c88">New</div><div class="a" style="left:995.50px;top:563.51px;width:13.40px;height:14.20px;background:#e2f8fd;border:1.7px solid #3f88ab;border-radius:1.5px"></div><div class="t" style="left:1010.60px;top:565.64px;font-size:10.8px;font-weight:400;color:#3c3c3c;transform:scaleX(0.886);transform-origin:0 0;">3</div><div class="a" style="left:1301.00px;top:560.82px;width:273.20px;height:20.50px;background:#e0f8fc;border-radius:10.25px;box-shadow:0 1px 1px rgba(0,0,0,0.13)"></div><div class="t" style="left:1314.20px;top:565.58px;font-size:10.2px;font-weight:700;color:#1f6f97;transform:scaleX(0.94);transform-origin:0 0;">0%</div><div class="t" style="left:1597.80px;top:565.64px;font-size:10.8px;font-weight:400;color:#3c3c3c;transform:scaleX(0.886);transform-origin:0 0;">WONId_20250120050433SN</div><div class="a" style="left:53.50px;top:609.00px;width:1944.00px;height:2.00px;background:#ebeced"></div><div class="a" style="left:66.30px;top:590.85px;width:12.80px;height:12.80px;background:#fff;border:1.2px solid #a6a6a6;border-radius:1.5px"></div><div class="t" style="left:102.50px;top:592.17px;font-size:10.8px;font-weight:400;color:#3c3c3c;transform:scaleX(0.886);transform-origin:0 0;">WONId_WO1_202501200514...</div><svg class="a" style="left:248.60px;top:592.54px;" width="14" height="13" viewBox="0 0 14 13"><path d="M3.2 1.9 H0.6 V12.3 H10.2 V8" fill="none" stroke="#6e6e6e" stroke-width="1.05"/><path d="M6.6 10.4 L4.5 7.2 L6.6 3.9 H12.8" fill="none" stroke="#6e6e6e" stroke-width="1"/><path d="M10.6 1.5 L12.9 3.9 L10.6 6.3" fill="none" stroke="#6e6e6e" stroke-width="1"/></svg><div class="t" style="left:288.00px;top:592.17px;font-size:10.8px;font-weight:400;color:#3c3c3c;transform:scaleX(0.886);transform-origin:0 0;">Serialized</div><div class="t" style="left:474.00px;top:592.17px;font-size:10.8px;font-weight:400;color:#3c3c3c;transform:scaleX(0.886);transform-origin:0 0;">MatDefNId_20250120051416</div><div class="a" style="left:659.80px;top:587.25px;width:53.60px;height:20.30px;background:#c8eefa;border:1.2px solid #4595b8;border-bottom:1.8px solid #3a88ad;border-radius:10.5px"></div><svg class="a" style="left:666.30px;top:591.04px;" width="13" height="13" viewBox="0 0 13 13"><circle cx="6.5" cy="6.5" r="5.6" fill="#fff" stroke="#6f6f6f" stroke-width="1.1"/><path d="M0.9 6.5 A5.6 5.6 0 0 1 12.1 6.5 Z" fill="#19c419"/><path d="M0.9 6.5 A5.6 5.6 0 0 1 12.1 6.5" fill="none" stroke="#119011" stroke-width="0.8"/></svg><div class="t" style="left:682.50px;top:592.66px;font-size:10.7px;font-weight:400;color:#155c88;transform:scaleX(0.94);transform-origin:0 0;-webkit-text-stroke:0.3px #155c88">New</div><div class="a" style="left:995.50px;top:590.04px;width:13.40px;height:14.20px;background:#e2f8fd;border:1.7px solid #3f88ab;border-radius:1.5px"></div><div class="t" style="left:1010.60px;top:592.17px;font-size:10.8px;font-weight:400;color:#3c3c3c;transform:scaleX(0.886);transform-origin:0 0;">3</div><div class="a" style="left:1301.00px;top:587.35px;width:273.20px;height:20.50px;background:#e0f8fc;border-radius:10.25px;box-shadow:0 1px 1px rgba(0,0,0,0.13)"></div><div class="t" style="left:1314.20px;top:592.11px;font-size:10.2px;font-weight:700;color:#1f6f97;transform:scaleX(0.94);transform-origin:0 0;">0%</div><div class="t" style="left:1597.80px;top:592.17px;font-size:10.8px;font-weight:400;color:#3c3c3c;transform:scaleX(0.886);transform-origin:0 0;">WONId_WO1_20250120051416</div><div class="a" style="left:53.50px;top:636.00px;width:1944.00px;height:2.00px;background:#ebeced"></div><div class="a" style="left:66.30px;top:617.38px;width:12.80px;height:12.80px;background:#fff;border:1.2px solid #a6a6a6;border-radius:1.5px"></div><div class="t" style="left:102.50px;top:618.70px;font-size:10.8px;font-weight:400;color:#3c3c3c;transform:scaleX(0.886);transform-origin:0 0;">WONId_20250120050433FQ</div><svg class="a" style="left:248.60px;top:619.07px;" width="14" height="13" viewBox="0 0 14 13"><path d="M3.2 1.9 H0.6 V12.3 H10.2 V8" fill="none" stroke="#6e6e6e" stroke-width="1.05"/><path d="M6.6 10.4 L4.5 7.2 L6.6 3.9 H12.8" fill="none" stroke="#6e6e6e" stroke-width="1"/><path d="M10.6 1.5 L12.9 3.9 L10.6 6.3" fill="none" stroke="#6e6e6e" stroke-width="1"/></svg><div class="t" style="left:288.00px;top:618.70px;font-size:10.8px;font-weight:400;color:#3c3c3c;transform:scaleX(0.886);transform-origin:0 0;">FullQuantity</div><div class="t" style="left:474.00px;top:618.70px;font-size:10.8px;font-weight:400;color:#3c3c3c;transform:scaleX(0.886);transform-origin:0 0;">MatDefNId_20250120050433</div><div class="a" style="left:659.80px;top:613.77px;width:53.60px;height:20.30px;background:#c8eefa;border:1.2px solid #4595b8;border-bottom:1.8px solid #3a88ad;border-radius:10.5px"></div><svg class="a" style="left:666.30px;top:617.57px;" width="13" height="13" viewBox="0 0 13 13"><circle cx="6.5" cy="6.5" r="5.6" fill="#fff" stroke="#6f6f6f" stroke-width="1.1"/><path d="M0.9 6.5 A5.6 5.6 0 0 1 12.1 6.5 Z" fill="#19c419"/><path d="M0.9 6.5 A5.6 5.6 0 0 1 12.1 6.5" fill="none" stroke="#119011" stroke-width="0.8"/></svg><div class="t" style="left:682.50px;top:619.19px;font-size:10.7px;font-weight:400;color:#155c88;transform:scaleX(0.94);transform-origin:0 0;-webkit-text-stroke:0.3px #155c88">New</div><div class="a" style="left:995.50px;top:616.57px;width:13.40px;height:14.20px;background:#e2f8fd;border:1.7px solid #3f88ab;border-radius:1.5px"></div><div class="t" style="left:1010.60px;top:618.70px;font-size:10.8px;font-weight:400;color:#3c3c3c;transform:scaleX(0.886);transform-origin:0 0;">2</div><div class="a" style="left:1301.00px;top:613.88px;width:273.20px;height:20.50px;background:#e0f8fc;border-radius:10.25px;box-shadow:0 1px 1px rgba(0,0,0,0.13)"></div><div class="t" style="left:1314.20px;top:618.64px;font-size:10.2px;font-weight:700;color:#1f6f97;transform:scaleX(0.94);transform-origin:0 0;">0%</div><div class="t" style="left:1597.80px;top:618.70px;font-size:10.8px;font-weight:400;color:#3c3c3c;transform:scaleX(0.886);transform-origin:0 0;">WONId_20250120050433FQ</div><div class="a" style="left:53.50px;top:662.00px;width:1944.00px;height:2.00px;background:#ebeced"></div><div class="a" style="left:66.30px;top:643.91px;width:12.80px;height:12.80px;background:#fff;border:1.2px solid #a6a6a6;border-radius:1.5px"></div><div class="t" style="left:102.50px;top:645.23px;font-size:10.8px;font-weight:400;color:#3c3c3c;transform:scaleX(0.886);transform-origin:0 0;">WONId_202501200741</div><svg class="a" style="left:248.60px;top:645.61px;" width="14" height="13" viewBox="0 0 14 13"><path d="M3.2 1.9 H0.6 V12.3 H10.2 V8" fill="none" stroke="#6e6e6e" stroke-width="1.05"/><path d="M6.6 10.4 L4.5 7.2 L6.6 3.9 H12.8" fill="none" stroke="#6e6e6e" stroke-width="1"/><path d="M10.6 1.5 L12.9 3.9 L10.6 6.3" fill="none" stroke="#6e6e6e" stroke-width="1"/></svg><div class="t" style="left:288.00px;top:645.23px;font-size:10.8px;font-weight:400;color:#3c3c3c;transform:scaleX(0.886);transform-origin:0 0;">Serialized</div><div class="t" style="left:474.00px;top:645.23px;font-size:10.8px;font-weight:400;color:#3c3c3c;transform:scaleX(0.886);transform-origin:0 0;">FinMatDefNId_202501200741</div><div class="a" style="left:659.80px;top:640.31px;width:61.50px;height:20.30px;background:#c8eefa;border:1.2px solid #4595b8;border-bottom:1.8px solid #3a88ad;border-radius:10.5px"></div><svg class="a" style="left:666.30px;top:644.11px;" width="13" height="13" viewBox="0 0 13 13"><circle cx="6.5" cy="6.5" r="5.6" fill="#fff" stroke="#5a5a5a" stroke-width="1.2"/><path d="M2.54 2.54 A5.6 5.6 0 0 1 10.46 10.46 Z" fill="#1a6d97"/></svg><div class="t" style="left:682.50px;top:645.72px;font-size:10.7px;font-weight:400;color:#155c88;transform:scaleX(0.94);transform-origin:0 0;-webkit-text-stroke:0.3px #155c88">Active</div><div class="a" style="left:995.50px;top:643.11px;width:13.40px;height:14.20px;background:#e2f8fd;border:1.7px solid #3f88ab;border-radius:1.5px"></div><div class="t" style="left:1010.60px;top:645.23px;font-size:10.8px;font-weight:400;color:#3c3c3c;transform:scaleX(0.886);transform-origin:0 0;">2</div><div class="a" style="left:1301.00px;top:640.41px;width:273.20px;height:20.50px;background:#e0f8fc;border-radius:10.25px;box-shadow:0 1px 1px rgba(0,0,0,0.13)"></div><div class="t" style="left:1314.20px;top:645.17px;font-size:10.2px;font-weight:700;color:#1f6f97;transform:scaleX(0.94);transform-origin:0 0;">0%</div><div class="t" style="left:1597.80px;top:645.23px;font-size:10.8px;font-weight:400;color:#3c3c3c;transform:scaleX(0.886);transform-origin:0 0;">WONId_202501200741</div><div class="a" style="left:53.50px;top:689.00px;width:1944.00px;height:2.00px;background:#ebeced"></div><div class="a" style="left:66.30px;top:670.44px;width:12.80px;height:12.80px;background:#fff;border:1.2px solid #a6a6a6;border-radius:1.5px"></div><div class="t" style="left:102.50px;top:671.76px;font-size:10.8px;font-weight:400;color:#3c3c3c;transform:scaleX(0.886);transform-origin:0 0;">WONId_20250120062803SN</div><svg class="a" style="left:248.60px;top:672.13px;" width="14" height="13" viewBox="0 0 14 13"><path d="M3.2 1.9 H0.6 V12.3 H10.2 V8" fill="none" stroke="#6e6e6e" stroke-width="1.05"/><path d="M6.6 10.4 L4.5 7.2 L6.6 3.9 H12.8" fill="none" stroke="#6e6e6e" stroke-width="1"/><path d="M10.6 1.5 L12.9 3.9 L10.6 6.3" fill="none" stroke="#6e6e6e" stroke-width="1"/></svg><div class="t" style="left:288.00px;top:671.76px;font-size:10.8px;font-weight:400;color:#3c3c3c;transform:scaleX(0.886);transform-origin:0 0;">Serialized</div><div class="t" style="left:474.00px;top:671.76px;font-size:10.8px;font-weight:400;color:#3c3c3c;transform:scaleX(0.886);transform-origin:0 0;">MatDefNId_20250120062803</div><div class="a" style="left:659.80px;top:666.84px;width:76.50px;height:20.30px;background:#c8eefa;border:1.2px solid #4595b8;border-bottom:1.8px solid #3a88ad;border-radius:10.5px"></div><svg class="a" style="left:666.30px;top:670.63px;" width="13" height="13" viewBox="0 0 13 13"><circle cx="6.5" cy="6.5" r="6" fill="#0b7a0e" stroke="#08520a" stroke-width="0.8"/><path d="M3.4 6.6 L5.6 8.9 L9.7 4.3" fill="none" stroke="#fff" stroke-width="1.7"/></svg><div class="t" style="left:682.50px;top:672.25px;font-size:10.7px;font-weight:400;color:#155c88;transform:scaleX(0.94);transform-origin:0 0;-webkit-text-stroke:0.3px #155c88">Complete</div><div class="a" style="left:995.50px;top:669.63px;width:13.40px;height:14.20px;background:#e2f8fd;border:1.7px solid #3f88ab;border-radius:1.5px"></div><div class="t" style="left:1010.60px;top:671.76px;font-size:10.8px;font-weight:400;color:#3c3c3c;transform:scaleX(0.886);transform-origin:0 0;">2</div><svg class="a" style="left:1028.30px;top:669.84px;" width="13.6" height="13.6" viewBox="0 0 20.5 20.5"><path d="M0.8 7.5 L8 4 L15.3 8 V15.6 L8 19.5 L0.8 15.8 Z" fill="#f39200" stroke="#5e3c00" stroke-width="1.2" stroke-linejoin="round"/><path d="M0.8 7.5 L8 11.5 L15.3 8 M8 11.5 V19.5 M4.4 5.8 L11.6 9.8" fill="none" stroke="#6a4400" stroke-width="1.1"/><circle cx="15" cy="5.7" r="5.1" fill="#13884a" stroke="#0b5e30" stroke-width="0.7"/><path d="M12.4 6 L14.3 8.1 L17.8 3.8" fill="none" stroke="#b6e6c8" stroke-width="1.5"/></svg><div class="t" style="left:1043.70px;top:671.76px;font-size:10.8px;font-weight:400;color:#3c3c3c;transform:scaleX(0.886);transform-origin:0 0;">2</div><div class="a" style="left:1301.00px;top:666.94px;width:273.20px;height:20.50px;background:#00628b;border-radius:10.25px"></div><div class="t" style="left:1407.60px;width:60px;text-align:center;top:671.79px;font-size:10px;font-weight:700;color:#ffffff;transform:scaleX(0.82);transform-origin:50% 0;">100%</div><div class="t" style="left:1597.80px;top:671.76px;font-size:10.8px;font-weight:400;color:#3c3c3c;transform:scaleX(0.886);transform-origin:0 0;">WONId_20250120062803SN</div><div class="a" style="left:53.50px;top:716.00px;width:1944.00px;height:2.00px;background:#ebeced"></div><div class="a" style="left:66.30px;top:696.97px;width:12.80px;height:12.80px;background:#fff;border:1.2px solid #a6a6a6;border-radius:1.5px"></div><div class="t" style="left:102.50px;top:698.29px;font-size:10.8px;font-weight:400;color:#3c3c3c;transform:scaleX(0.886);transform-origin:0 0;">WONId_20250120070027SN</div><svg class="a" style="left:248.60px;top:698.66px;" width="14" height="13" viewBox="0 0 14 13"><path d="M3.2 1.9 H0.6 V12.3 H10.2 V8" fill="none" stroke="#6e6e6e" stroke-width="1.05"/><path d="M6.6 10.4 L4.5 7.2 L6.6 3.9 H12.8" fill="none" stroke="#6e6e6e" stroke-width="1"/><path d="M10.6 1.5 L12.9 3.9 L10.6 6.3" fill="none" stroke="#6e6e6e" stroke-width="1"/></svg><div class="t" style="left:288.00px;top:698.29px;font-size:10.8px;font-weight:400;color:#3c3c3c;transform:scaleX(0.886);transform-origin:0 0;">FullSerialized</div><div class="t" style="left:474.00px;top:698.29px;font-size:10.8px;font-weight:400;color:#3c3c3c;transform:scaleX(0.886);transform-origin:0 0;">MatDefNId_20250120070027</div><div class="a" style="left:659.80px;top:693.37px;width:76.50px;height:20.30px;background:#c8eefa;border:1.2px solid #4595b8;border-bottom:1.8px solid #3a88ad;border-radius:10.5px"></div><svg class="a" style="left:666.30px;top:697.16px;" width="13" height="13" viewBox="0 0 13 13"><circle cx="6.5" cy="6.5" r="6" fill="#0b7a0e" stroke="#08520a" stroke-width="0.8"/><path d="M3.4 6.6 L5.6 8.9 L9.7 4.3" fill="none" stroke="#fff" stroke-width="1.7"/></svg><div class="t" style="left:682.50px;top:698.78px;font-size:10.7px;font-weight:400;color:#155c88;transform:scaleX(0.94);transform-origin:0 0;-webkit-text-stroke:0.3px #155c88">Complete</div><div class="a" style="left:995.50px;top:696.16px;width:13.40px;height:14.20px;background:#e2f8fd;border:1.7px solid #3f88ab;border-radius:1.5px"></div><div class="t" style="left:1010.60px;top:698.29px;font-size:10.8px;font-weight:400;color:#3c3c3c;transform:scaleX(0.886);transform-origin:0 0;">2</div><svg class="a" style="left:1028.30px;top:696.37px;" width="13.6" height="13.6" viewBox="0 0 20.5 20.5"><path d="M0.8 7.5 L8 4 L15.3 8 V15.6 L8 19.5 L0.8 15.8 Z" fill="#f39200" stroke="#5e3c00" stroke-width="1.2" stroke-linejoin="round"/><path d="M0.8 7.5 L8 11.5 L15.3 8 M8 11.5 V19.5 M4.4 5.8 L11.6 9.8" fill="none" stroke="#6a4400" stroke-width="1.1"/><circle cx="15" cy="5.7" r="5.1" fill="#13884a" stroke="#0b5e30" stroke-width="0.7"/><path d="M12.4 6 L14.3 8.1 L17.8 3.8" fill="none" stroke="#b6e6c8" stroke-width="1.5"/></svg><div class="t" style="left:1043.70px;top:698.29px;font-size:10.8px;font-weight:400;color:#3c3c3c;transform:scaleX(0.886);transform-origin:0 0;">2</div><div class="a" style="left:1301.00px;top:693.47px;width:273.20px;height:20.50px;background:#00628b;border-radius:10.25px"></div><div class="t" style="left:1407.60px;width:60px;text-align:center;top:698.32px;font-size:10px;font-weight:700;color:#ffffff;transform:scaleX(0.82);transform-origin:50% 0;">100%</div><div class="t" style="left:1597.80px;top:698.29px;font-size:10.8px;font-weight:400;color:#3c3c3c;transform:scaleX(0.886);transform-origin:0 0;">WONId_20250120070027SN</div><div class="a" style="left:53.50px;top:742.00px;width:1944.00px;height:2.00px;background:#ebeced"></div><div class="a" style="left:66.30px;top:723.50px;width:12.80px;height:12.80px;background:#fff;border:1.2px solid #a6a6a6;border-radius:1.5px"></div><div class="t" style="left:102.50px;top:724.82px;font-size:10.8px;font-weight:400;color:#3c3c3c;transform:scaleX(0.886);transform-origin:0 0;">WONId_Serialized_20250120...</div><svg class="a" style="left:248.60px;top:725.19px;" width="14" height="13" viewBox="0 0 14 13"><path d="M3.2 1.9 H0.6 V12.3 H10.2 V8" fill="none" stroke="#6e6e6e" stroke-width="1.05"/><path d="M6.6 10.4 L4.5 7.2 L6.6 3.9 H12.8" fill="none" stroke="#6e6e6e" stroke-width="1"/><path d="M10.6 1.5 L12.9 3.9 L10.6 6.3" fill="none" stroke="#6e6e6e" stroke-width="1"/></svg><div class="t" style="left:288.00px;top:724.82px;font-size:10.8px;font-weight:400;color:#3c3c3c;transform:scaleX(0.886);transform-origin:0 0;">Serialized</div><div class="t" style="left:474.00px;top:724.82px;font-size:10.8px;font-weight:400;color:#3c3c3c;transform:scaleX(0.886);transform-origin:0 0;">MatDefNId_20250120061248</div><div class="a" style="left:659.80px;top:719.89px;width:61.50px;height:20.30px;background:#c8eefa;border:1.2px solid #4595b8;border-bottom:1.8px solid #3a88ad;border-radius:10.5px"></div><svg class="a" style="left:666.30px;top:723.69px;" width="13" height="13" viewBox="0 0 13 13"><circle cx="6.5" cy="6.5" r="5.6" fill="#fff" stroke="#5a5a5a" stroke-width="1.2"/><path d="M2.54 2.54 A5.6 5.6 0 0 1 10.46 10.46 Z" fill="#1a6d97"/></svg><div class="t" style="left:682.50px;top:725.31px;font-size:10.7px;font-weight:400;color:#155c88;transform:scaleX(0.94);transform-origin:0 0;-webkit-text-stroke:0.3px #155c88">Active</div><div class="a" style="left:995.50px;top:722.69px;width:13.40px;height:14.20px;background:#e2f8fd;border:1.7px solid #3f88ab;border-radius:1.5px"></div><div class="t" style="left:1010.60px;top:724.82px;font-size:10.8px;font-weight:400;color:#3c3c3c;transform:scaleX(0.886);transform-origin:0 0;">2</div><div class="a" style="left:1301.00px;top:720.00px;width:273.20px;height:20.50px;background:#e0f8fc;border-radius:10.25px;box-shadow:0 1px 1px rgba(0,0,0,0.13)"></div><div class="t" style="left:1314.20px;top:724.76px;font-size:10.2px;font-weight:700;color:#1f6f97;transform:scaleX(0.94);transform-origin:0 0;">0%</div><div class="t" style="left:1597.80px;top:724.82px;font-size:10.8px;font-weight:400;color:#3c3c3c;transform:scaleX(0.886);transform-origin:0 0;">WONId_Serialized_20250120061248</div><div class="a" style="left:53.50px;top:769.00px;width:1944.00px;height:2.00px;background:#ebeced"></div><div class="a" style="left:66.30px;top:750.03px;width:12.80px;height:12.80px;background:#fff;border:1.2px solid #a6a6a6;border-radius:1.5px"></div><div class="t" style="left:102.50px;top:751.35px;font-size:10.8px;font-weight:400;color:#3c3c3c;transform:scaleX(0.886);transform-origin:0 0;">WONId_Serialized_20250120...</div><svg class="a" style="left:248.60px;top:751.73px;" width="14" height="13" viewBox="0 0 14 13"><path d="M3.2 1.9 H0.6 V12.3 H10.2 V8" fill="none" stroke="#6e6e6e" stroke-width="1.05"/><path d="M6.6 10.4 L4.5 7.2 L6.6 3.9 H12.8" fill="none" stroke="#6e6e6e" stroke-width="1"/><path d="M10.6 1.5 L12.9 3.9 L10.6 6.3" fill="none" stroke="#6e6e6e" stroke-width="1"/></svg><div class="t" style="left:288.00px;top:751.35px;font-size:10.8px;font-weight:400;color:#3c3c3c;transform:scaleX(0.886);transform-origin:0 0;">Serialized</div><div class="t" style="left:474.00px;top:751.35px;font-size:10.8px;font-weight:400;color:#3c3c3c;transform:scaleX(0.886);transform-origin:0 0;">MatDefNId_20250120055837</div><div class="a" style="left:659.80px;top:746.43px;width:76.50px;height:20.30px;background:#c8eefa;border:1.2px solid #4595b8;border-bottom:1.8px solid #3a88ad;border-radius:10.5px"></div><svg class="a" style="left:666.30px;top:750.23px;" width="13" height="13" viewBox="0 0 13 13"><circle cx="6.5" cy="6.5" r="6" fill="#0b7a0e" stroke="#08520a" stroke-width="0.8"/><path d="M3.4 6.6 L5.6 8.9 L9.7 4.3" fill="none" stroke="#fff" stroke-width="1.7"/></svg><div class="t" style="left:682.50px;top:751.84px;font-size:10.7px;font-weight:400;color:#155c88;transform:scaleX(0.94);transform-origin:0 0;-webkit-text-stroke:0.3px #155c88">Complete</div><div class="a" style="left:995.50px;top:749.23px;width:13.40px;height:14.20px;background:#e2f8fd;border:1.7px solid #3f88ab;border-radius:1.5px"></div><div class="t" style="left:1010.60px;top:751.35px;font-size:10.8px;font-weight:400;color:#3c3c3c;transform:scaleX(0.886);transform-origin:0 0;">2</div><svg class="a" style="left:1028.30px;top:749.43px;" width="13.6" height="13.6" viewBox="0 0 20.5 20.5"><path d="M0.8 7.5 L8 4 L15.3 8 V15.6 L8 19.5 L0.8 15.8 Z" fill="#f39200" stroke="#5e3c00" stroke-width="1.2" stroke-linejoin="round"/><path d="M0.8 7.5 L8 11.5 L15.3 8 M8 11.5 V19.5 M4.4 5.8 L11.6 9.8" fill="none" stroke="#6a4400" stroke-width="1.1"/><circle cx="15" cy="5.7" r="5.1" fill="#13884a" stroke="#0b5e30" stroke-width="0.7"/><path d="M12.4 6 L14.3 8.1 L17.8 3.8" fill="none" stroke="#b6e6c8" stroke-width="1.5"/></svg><div class="t" style="left:1043.70px;top:751.35px;font-size:10.8px;font-weight:400;color:#3c3c3c;transform:scaleX(0.886);transform-origin:0 0;">2</div><div class="a" style="left:1301.00px;top:746.53px;width:273.20px;height:20.50px;background:#00628b;border-radius:10.25px"></div><div class="t" style="left:1407.60px;width:60px;text-align:center;top:751.38px;font-size:10px;font-weight:700;color:#ffffff;transform:scaleX(0.82);transform-origin:50% 0;">100%</div><div class="t" style="left:1597.80px;top:751.35px;font-size:10.8px;font-weight:400;color:#3c3c3c;transform:scaleX(0.886);transform-origin:0 0;">WONId_Serialized_20250120055837</div><div class="a" style="left:53.50px;top:795.00px;width:1944.00px;height:2.00px;background:#ebeced"></div><div class="a" style="left:66.30px;top:776.56px;width:12.80px;height:12.80px;background:#fff;border:1.2px solid #a6a6a6;border-radius:1.5px"></div><div class="t" style="left:102.50px;top:777.88px;font-size:10.8px;font-weight:400;color:#3c3c3c;transform:scaleX(0.886);transform-origin:0 0;">WONId_202501200751</div><svg class="a" style="left:248.60px;top:778.25px;" width="14" height="13" viewBox="0 0 14 13"><path d="M3.2 1.9 H0.6 V12.3 H10.2 V8" fill="none" stroke="#6e6e6e" stroke-width="1.05"/><path d="M6.6 10.4 L4.5 7.2 L6.6 3.9 H12.8" fill="none" stroke="#6e6e6e" stroke-width="1"/><path d="M10.6 1.5 L12.9 3.9 L10.6 6.3" fill="none" stroke="#6e6e6e" stroke-width="1"/></svg><div class="t" style="left:288.00px;top:777.88px;font-size:10.8px;font-weight:400;color:#3c3c3c;transform:scaleX(0.886);transform-origin:0 0;">FullQuantity</div><div class="t" style="left:474.00px;top:777.88px;font-size:10.8px;font-weight:400;color:#3c3c3c;transform:scaleX(0.886);transform-origin:0 0;">FinMatDefNId_202501200751</div><div class="a" style="left:659.80px;top:772.96px;width:61.50px;height:20.30px;background:#c8eefa;border:1.2px solid #4595b8;border-bottom:1.8px solid #3a88ad;border-radius:10.5px"></div><svg class="a" style="left:666.30px;top:776.75px;" width="13" height="13" viewBox="0 0 13 13"><circle cx="6.5" cy="6.5" r="5.6" fill="#fff" stroke="#5a5a5a" stroke-width="1.2"/><path d="M2.54 2.54 A5.6 5.6 0 0 1 10.46 10.46 Z" fill="#1a6d97"/></svg><div class="t" style="left:682.50px;top:778.37px;font-size:10.7px;font-weight:400;color:#155c88;transform:scaleX(0.94);transform-origin:0 0;-webkit-text-stroke:0.3px #155c88">Active</div><div class="a" style="left:995.50px;top:775.75px;width:13.40px;height:14.20px;background:#e2f8fd;border:1.7px solid #3f88ab;border-radius:1.5px"></div><div class="t" style="left:1010.60px;top:777.88px;font-size:10.8px;font-weight:400;color:#3c3c3c;transform:scaleX(0.886);transform-origin:0 0;">2</div><div class="a" style="left:1301.00px;top:773.06px;width:273.20px;height:20.50px;background:#e0f8fc;border-radius:10.25px;box-shadow:0 1px 1px rgba(0,0,0,0.13)"></div><div class="t" style="left:1314.20px;top:777.82px;font-size:10.2px;font-weight:700;color:#1f6f97;transform:scaleX(0.94);transform-origin:0 0;">0%</div><div class="t" style="left:1597.80px;top:777.88px;font-size:10.8px;font-weight:400;color:#3c3c3c;transform:scaleX(0.886);transform-origin:0 0;">WONId_202501200751</div><div class="a" style="left:53.50px;top:822.00px;width:1944.00px;height:2.00px;background:#ebeced"></div><div class="a" style="left:66.30px;top:803.09px;width:12.80px;height:12.80px;background:#fff;border:1.2px solid #a6a6a6;border-radius:1.5px"></div><div class="t" style="left:102.50px;top:804.41px;font-size:10.8px;font-weight:400;color:#3c3c3c;transform:scaleX(0.886);transform-origin:0 0;">WO_NET_002</div><svg class="a" style="left:248.60px;top:804.78px;" width="14" height="13" viewBox="0 0 14 13"><path d="M3.2 1.9 H0.6 V12.3 H10.2 V8" fill="none" stroke="#6e6e6e" stroke-width="1.05"/><path d="M6.6 10.4 L4.5 7.2 L6.6 3.9 H12.8" fill="none" stroke="#6e6e6e" stroke-width="1"/><path d="M10.6 1.5 L12.9 3.9 L10.6 6.3" fill="none" stroke="#6e6e6e" stroke-width="1"/></svg><div class="t" style="left:288.00px;top:804.41px;font-size:10.8px;font-weight:400;color:#3c3c3c;transform:scaleX(0.886);transform-origin:0 0;">Serialized</div><div class="t" style="left:474.00px;top:804.41px;font-size:10.8px;font-weight:400;color:#3c3c3c;transform:scaleX(0.886);transform-origin:0 0;">500_20250120053518</div><div class="a" style="left:659.80px;top:799.49px;width:50.40px;height:20.30px;background:#c8eefa;border:1.2px solid #4595b8;border-bottom:1.8px solid #3a88ad;border-radius:10.5px"></div><svg class="a" style="left:666.30px;top:803.28px;" width="13" height="13" viewBox="0 0 13 13"><rect x="0.7" y="0.7" width="11.6" height="11.6" fill="#f6c27a" stroke="#e6962e" stroke-width="1.3"/><rect x="2.3" y="2.3" width="8.4" height="8.4" fill="#fde9c8"/><path d="M3.3 9.7 L9.8 3.2" stroke="#e28a2a" stroke-width="1.5"/></svg><div class="t" style="left:682.50px;top:804.90px;font-size:10.7px;font-weight:400;color:#155c88;transform:scaleX(0.94);transform-origin:0 0;-webkit-text-stroke:0.3px #155c88">Edit</div><div class="a" style="left:995.50px;top:802.28px;width:13.40px;height:14.20px;background:#e2f8fd;border:1.7px solid #3f88ab;border-radius:1.5px"></div><div class="t" style="left:1010.60px;top:804.41px;font-size:10.8px;font-weight:400;color:#3c3c3c;transform:scaleX(0.886);transform-origin:0 0;">1</div><div class="a" style="left:1301.00px;top:799.59px;width:273.20px;height:20.50px;background:#e0f8fc;border-radius:10.25px;box-shadow:0 1px 1px rgba(0,0,0,0.13)"></div><div class="t" style="left:1314.20px;top:804.35px;font-size:10.2px;font-weight:700;color:#1f6f97;transform:scaleX(0.94);transform-origin:0 0;">0%</div><div class="t" style="left:1597.80px;top:804.41px;font-size:10.8px;font-weight:400;color:#3c3c3c;transform:scaleX(0.886);transform-origin:0 0;">PB_NET_001</div><div class="a" style="left:53.50px;top:848.00px;width:1944.00px;height:2.00px;background:#ebeced"></div><div class="a" style="left:66.30px;top:829.62px;width:12.80px;height:12.80px;background:#fff;border:1.2px solid #a6a6a6;border-radius:1.5px"></div><div class="t" style="left:102.50px;top:830.94px;font-size:10.8px;font-weight:400;color:#3c3c3c;transform:scaleX(0.886);transform-origin:0 0;">WO_NET_003</div><svg class="a" style="left:248.60px;top:831.31px;" width="14" height="13" viewBox="0 0 14 13"><path d="M3.2 1.9 H0.6 V12.3 H10.2 V8" fill="none" stroke="#6e6e6e" stroke-width="1.05"/><path d="M6.6 10.4 L4.5 7.2 L6.6 3.9 H12.8" fill="none" stroke="#6e6e6e" stroke-width="1"/><path d="M10.6 1.5 L12.9 3.9 L10.6 6.3" fill="none" stroke="#6e6e6e" stroke-width="1"/></svg><div class="t" style="left:288.00px;top:830.94px;font-size:10.8px;font-weight:400;color:#3c3c3c;transform:scaleX(0.886);transform-origin:0 0;">Serialized</div><div class="t" style="left:474.00px;top:830.94px;font-size:10.8px;font-weight:400;color:#3c3c3c;transform:scaleX(0.886);transform-origin:0 0;">500_20250120053518</div><div class="a" style="left:659.80px;top:826.01px;width:50.40px;height:20.30px;background:#c8eefa;border:1.2px solid #4595b8;border-bottom:1.8px solid #3a88ad;border-radius:10.5px"></div><svg class="a" style="left:666.30px;top:829.81px;" width="13" height="13" viewBox="0 0 13 13"><rect x="0.7" y="0.7" width="11.6" height="11.6" fill="#f6c27a" stroke="#e6962e" stroke-width="1.3"/><rect x="2.3" y="2.3" width="8.4" height="8.4" fill="#fde9c8"/><path d="M3.3 9.7 L9.8 3.2" stroke="#e28a2a" stroke-width="1.5"/></svg><div class="t" style="left:682.50px;top:831.43px;font-size:10.7px;font-weight:400;color:#155c88;transform:scaleX(0.94);transform-origin:0 0;-webkit-text-stroke:0.3px #155c88">Edit</div><div class="a" style="left:995.50px;top:828.81px;width:13.40px;height:14.20px;background:#e2f8fd;border:1.7px solid #3f88ab;border-radius:1.5px"></div><div class="t" style="left:1010.60px;top:830.94px;font-size:10.8px;font-weight:400;color:#3c3c3c;transform:scaleX(0.886);transform-origin:0 0;">1</div><div class="a" style="left:1301.00px;top:826.12px;width:273.20px;height:20.50px;background:#e0f8fc;border-radius:10.25px;box-shadow:0 1px 1px rgba(0,0,0,0.13)"></div><div class="t" style="left:1314.20px;top:830.88px;font-size:10.2px;font-weight:700;color:#1f6f97;transform:scaleX(0.94);transform-origin:0 0;">0%</div><div class="t" style="left:1597.80px;top:830.94px;font-size:10.8px;font-weight:400;color:#3c3c3c;transform:scaleX(0.886);transform-origin:0 0;">PB_NET_001</div><div class="a" style="left:53.50px;top:875.00px;width:1944.00px;height:2.00px;background:#ebeced"></div><div class="a" style="left:66.30px;top:856.14px;width:12.80px;height:12.80px;background:#6b6b6b;border-radius:1.5px"></div><svg class="a" style="left:66.30px;top:856.14px;" width="13" height="13" viewBox="0 0 13 13"><path d="M2.6 6.6 L5.3 9.2 L10.4 3.6" fill="none" stroke="#fff" stroke-width="1.8"/></svg><div class="t" style="left:102.50px;top:857.47px;font-size:10.8px;font-weight:400;color:#3c3c3c;transform:scaleX(0.886);transform-origin:0 0;">WO_NET_001</div><svg class="a" style="left:248.60px;top:857.84px;" width="14" height="13" viewBox="0 0 14 13"><path d="M3.2 1.9 H0.6 V12.3 H10.2 V8" fill="none" stroke="#6e6e6e" stroke-width="1.05"/><path d="M6.6 10.4 L4.5 7.2 L6.6 3.9 H12.8" fill="none" stroke="#6e6e6e" stroke-width="1"/><path d="M10.6 1.5 L12.9 3.9 L10.6 6.3" fill="none" stroke="#6e6e6e" stroke-width="1"/></svg><div class="t" style="left:288.00px;top:857.47px;font-size:10.8px;font-weight:400;color:#3c3c3c;transform:scaleX(0.886);transform-origin:0 0;">Serialized</div><div class="t" style="left:474.00px;top:857.47px;font-size:10.8px;font-weight:400;color:#3c3c3c;transform:scaleX(0.886);transform-origin:0 0;">500_20250120053518</div><div class="a" style="left:659.80px;top:852.54px;width:50.40px;height:20.30px;background:#c8eefa;border:1.2px solid #4595b8;border-bottom:1.8px solid #3a88ad;border-radius:10.5px"></div><svg class="a" style="left:666.30px;top:856.34px;" width="13" height="13" viewBox="0 0 13 13"><rect x="0.7" y="0.7" width="11.6" height="11.6" fill="#f6c27a" stroke="#e6962e" stroke-width="1.3"/><rect x="2.3" y="2.3" width="8.4" height="8.4" fill="#fde9c8"/><path d="M3.3 9.7 L9.8 3.2" stroke="#e28a2a" stroke-width="1.5"/></svg><div class="t" style="left:682.50px;top:857.96px;font-size:10.7px;font-weight:400;color:#155c88;transform:scaleX(0.94);transform-origin:0 0;-webkit-text-stroke:0.3px #155c88">Edit</div><div class="a" style="left:995.50px;top:855.34px;width:13.40px;height:14.20px;background:#e2f8fd;border:1.7px solid #3f88ab;border-radius:1.5px"></div><div class="t" style="left:1010.60px;top:857.47px;font-size:10.8px;font-weight:400;color:#3c3c3c;transform:scaleX(0.886);transform-origin:0 0;">1</div><div class="a" style="left:1301.00px;top:852.64px;width:273.20px;height:20.50px;background:#e0f8fc;border-radius:10.25px;box-shadow:0 1px 1px rgba(0,0,0,0.13)"></div><div class="t" style="left:1314.20px;top:857.41px;font-size:10.2px;font-weight:700;color:#1f6f97;transform:scaleX(0.94);transform-origin:0 0;">0%</div><div class="t" style="left:1597.80px;top:857.47px;font-size:10.8px;font-weight:400;color:#3c3c3c;transform:scaleX(0.886);transform-origin:0 0;">PB_NET_001</div><div class="a" style="left:53.50px;top:901.00px;width:1944.00px;height:2.00px;background:#ebeced"></div><div class="a" style="left:66.30px;top:882.68px;width:12.80px;height:12.80px;background:#fff;border:1.2px solid #a6a6a6;border-radius:1.5px"></div><div class="t" style="left:102.50px;top:884.00px;font-size:10.8px;font-weight:400;color:#3c3c3c;transform:scaleX(0.886);transform-origin:0 0;">WONId_Serialized_20250120...</div><svg class="a" style="left:248.60px;top:884.38px;" width="14" height="13" viewBox="0 0 14 13"><path d="M3.2 1.9 H0.6 V12.3 H10.2 V8" fill="none" stroke="#6e6e6e" stroke-width="1.05"/><path d="M6.6 10.4 L4.5 7.2 L6.6 3.9 H12.8" fill="none" stroke="#6e6e6e" stroke-width="1"/><path d="M10.6 1.5 L12.9 3.9 L10.6 6.3" fill="none" stroke="#6e6e6e" stroke-width="1"/></svg><div class="t" style="left:288.00px;top:884.00px;font-size:10.8px;font-weight:400;color:#3c3c3c;transform:scaleX(0.886);transform-origin:0 0;">Serialized</div><div class="t" style="left:474.00px;top:884.00px;font-size:10.8px;font-weight:400;color:#3c3c3c;transform:scaleX(0.886);transform-origin:0 0;">MatDefNId_20250120053518</div><div class="a" style="left:659.80px;top:879.08px;width:76.50px;height:20.30px;background:#c8eefa;border:1.2px solid #4595b8;border-bottom:1.8px solid #3a88ad;border-radius:10.5px"></div><svg class="a" style="left:666.30px;top:882.88px;" width="13" height="13" viewBox="0 0 13 13"><circle cx="6.5" cy="6.5" r="6" fill="#0b7a0e" stroke="#08520a" stroke-width="0.8"/><path d="M3.4 6.6 L5.6 8.9 L9.7 4.3" fill="none" stroke="#fff" stroke-width="1.7"/></svg><div class="t" style="left:682.50px;top:884.49px;font-size:10.7px;font-weight:400;color:#155c88;transform:scaleX(0.94);transform-origin:0 0;-webkit-text-stroke:0.3px #155c88">Complete</div><div class="a" style="left:995.50px;top:881.88px;width:13.40px;height:14.20px;background:#e2f8fd;border:1.7px solid #3f88ab;border-radius:1.5px"></div><div class="t" style="left:1010.60px;top:884.00px;font-size:10.8px;font-weight:400;color:#3c3c3c;transform:scaleX(0.886);transform-origin:0 0;">1</div><svg class="a" style="left:1028.30px;top:882.08px;" width="13.6" height="13.6" viewBox="0 0 20.5 20.5"><path d="M0.8 7.5 L8 4 L15.3 8 V15.6 L8 19.5 L0.8 15.8 Z" fill="#f39200" stroke="#5e3c00" stroke-width="1.2" stroke-linejoin="round"/><path d="M0.8 7.5 L8 11.5 L15.3 8 M8 11.5 V19.5 M4.4 5.8 L11.6 9.8" fill="none" stroke="#6a4400" stroke-width="1.1"/><circle cx="15" cy="5.7" r="5.1" fill="#13884a" stroke="#0b5e30" stroke-width="0.7"/><path d="M12.4 6 L14.3 8.1 L17.8 3.8" fill="none" stroke="#b6e6c8" stroke-width="1.5"/></svg><div class="t" style="left:1043.70px;top:884.00px;font-size:10.8px;font-weight:400;color:#3c3c3c;transform:scaleX(0.886);transform-origin:0 0;">1</div><div class="a" style="left:1301.00px;top:879.18px;width:273.20px;height:20.50px;background:#00628b;border-radius:10.25px"></div><div class="t" style="left:1407.60px;width:60px;text-align:center;top:884.03px;font-size:10px;font-weight:700;color:#ffffff;transform:scaleX(0.82);transform-origin:50% 0;">100%</div><div class="t" style="left:1597.80px;top:884.00px;font-size:10.8px;font-weight:400;color:#3c3c3c;transform:scaleX(0.886);transform-origin:0 0;">WONId_Serialized_20250120053518</div><div class="a" style="left:53.50px;top:928.00px;width:1944.00px;height:2.00px;background:#ebeced"></div><div class="a" style="left:66.30px;top:909.21px;width:12.80px;height:12.80px;background:#fff;border:1.2px solid #a6a6a6;border-radius:1.5px"></div><div class="t" style="left:102.50px;top:910.53px;font-size:10.8px;font-weight:400;color:#3c3c3c;transform:scaleX(0.886);transform-origin:0 0;">WONId_Serialized_20250120...</div><svg class="a" style="left:248.60px;top:910.90px;" width="14" height="13" viewBox="0 0 14 13"><path d="M3.2 1.9 H0.6 V12.3 H10.2 V8" fill="none" stroke="#6e6e6e" stroke-width="1.05"/><path d="M6.6 10.4 L4.5 7.2 L6.6 3.9 H12.8" fill="none" stroke="#6e6e6e" stroke-width="1"/><path d="M10.6 1.5 L12.9 3.9 L10.6 6.3" fill="none" stroke="#6e6e6e" stroke-width="1"/></svg><div class="t" style="left:288.00px;top:910.53px;font-size:10.8px;font-weight:400;color:#3c3c3c;transform:scaleX(0.886);transform-origin:0 0;">FlexibleSerialized</div><div class="t" style="left:474.00px;top:910.53px;font-size:10.8px;font-weight:400;color:#3c3c3c;transform:scaleX(0.886);transform-origin:0 0;">MatDefNId_20250120055040</div><div class="a" style="left:659.80px;top:905.61px;width:59.00px;height:20.30px;background:#c8eefa;border:1.2px solid #4595b8;border-bottom:1.8px solid #3a88ad;border-radius:10.5px"></div><svg class="a" style="left:666.30px;top:909.40px;" width="13" height="13" viewBox="0 0 13 13"><circle cx="6.5" cy="6.5" r="5.5" fill="#e2e2e2" stroke="#858585" stroke-width="1.5"/><path d="M6.5 2.6 L10.4 6.5 L6.5 10.4 L2.6 6.5 Z" fill="#f4e31a" stroke="#c8b400" stroke-width="0.5"/></svg><div class="t" style="left:682.50px;top:911.02px;font-size:10.7px;font-weight:400;color:#155c88;transform:scaleX(0.94);transform-origin:0 0;-webkit-text-stroke:0.3px #155c88">Pause</div><svg class="a" style="left:995.50px;top:908.61px;" width="13.6" height="13.6" viewBox="0 0 20.5 20.5"><path d="M0.8 7.5 L8 4 L15.3 8 V15.6 L8 19.5 L0.8 15.8 Z" fill="#f39200" stroke="#5e3c00" stroke-width="1.2" stroke-linejoin="round"/><path d="M0.8 7.5 L8 11.5 L15.3 8 M8 11.5 V19.5 M4.4 5.8 L11.6 9.8" fill="none" stroke="#6a4400" stroke-width="1.1"/><circle cx="15" cy="5.7" r="5.1" fill="#13884a" stroke="#0b5e30" stroke-width="0.7"/><path d="M12.4 6 L14.3 8.1 L17.8 3.8" fill="none" stroke="#b6e6c8" stroke-width="1.5"/></svg><div class="t" style="left:1010.60px;top:910.53px;font-size:10.8px;font-weight:400;color:#3c3c3c;transform:scaleX(0.886);transform-origin:0 0;">1</div><div class="a" style="left:1301.00px;top:905.71px;width:273.20px;height:20.50px;background:#00628b;border-radius:10.25px"></div><div class="t" style="left:1407.60px;width:60px;text-align:center;top:910.56px;font-size:10px;font-weight:700;color:#ffffff;transform:scaleX(0.82);transform-origin:50% 0;">100%</div><div class="t" style="left:1597.80px;top:910.53px;font-size:10.8px;font-weight:400;color:#3c3c3c;transform:scaleX(0.886);transform-origin:0 0;">WONId_Serialized_20250120055040</div><div class="a" style="left:53.50px;top:954.00px;width:1944.00px;height:2.00px;background:#ebeced"></div><div class="a" style="left:66.30px;top:935.74px;width:12.80px;height:12.80px;background:#fff;border:1.2px solid #a6a6a6;border-radius:1.5px"></div><div class="t" style="left:102.50px;top:937.06px;font-size:10.8px;font-weight:400;color:#3c3c3c;transform:scaleX(0.886);transform-origin:0 0;">WONId_Serialized_20250120...</div><svg class="a" style="left:248.60px;top:937.43px;" width="14" height="13" viewBox="0 0 14 13"><path d="M3.2 1.9 H0.6 V12.3 H10.2 V8" fill="none" stroke="#6e6e6e" stroke-width="1.05"/><path d="M6.6 10.4 L4.5 7.2 L6.6 3.9 H12.8" fill="none" stroke="#6e6e6e" stroke-width="1"/><path d="M10.6 1.5 L12.9 3.9 L10.6 6.3" fill="none" stroke="#6e6e6e" stroke-width="1"/></svg><div class="t" style="left:288.00px;top:937.06px;font-size:10.8px;font-weight:400;color:#3c3c3c;transform:scaleX(0.886);transform-origin:0 0;">FlexibleBatch</div><div class="t" style="left:474.00px;top:937.06px;font-size:10.8px;font-weight:400;color:#3c3c3c;transform:scaleX(0.886);transform-origin:0 0;">MatDefNId_20250120054354</div><div class="a" style="left:659.80px;top:932.13px;width:61.50px;height:20.30px;background:#c8eefa;border:1.2px solid #4595b8;border-bottom:1.8px solid #3a88ad;border-radius:10.5px"></div><svg class="a" style="left:666.30px;top:935.93px;" width="13" height="13" viewBox="0 0 13 13"><circle cx="6.5" cy="6.5" r="5.6" fill="#fff" stroke="#5a5a5a" stroke-width="1.2"/><path d="M2.54 2.54 A5.6 5.6 0 0 1 10.46 10.46 Z" fill="#1a6d97"/></svg><div class="t" style="left:682.50px;top:937.55px;font-size:10.7px;font-weight:400;color:#155c88;transform:scaleX(0.94);transform-origin:0 0;-webkit-text-stroke:0.3px #155c88">Active</div><div class="a" style="left:1301.00px;top:932.24px;width:273.20px;height:20.50px;background:#e0f8fc;border-radius:10.25px;box-shadow:0 1px 1px rgba(0,0,0,0.13)"></div><div class="t" style="left:1314.20px;top:937.00px;font-size:10.2px;font-weight:700;color:#1f6f97;transform:scaleX(0.94);transform-origin:0 0;">0%</div><div class="t" style="left:1597.80px;top:937.06px;font-size:10.8px;font-weight:400;color:#3c3c3c;transform:scaleX(0.886);transform-origin:0 0;">WONId_Serialized_20250120054354</div><div class="a" style="left:53.50px;top:980.20px;width:1944.00px;height:1.60px;background:#e9eaeb"></div><svg class="a" style="left:2008.00px;top:49.00px;" width="25" height="23" viewBox="0 0 25 23"><path d="M6 6.2 H2 V21 H17.8 V14" fill="none" stroke="#555" stroke-width="1.4"/><path d="M12.3 17.3 L8.6 11.8 L11.8 6.5 H22.3" fill="none" stroke="#555" stroke-width="1.3"/><path d="M18.5 2 L22.5 6.5 L18.5 11" fill="none" stroke="#555" stroke-width="1.3"/></svg><div class="t" style="left:1997.50px;width:46px;text-align:center;top:72.47px;font-size:7px;font-weight:400;color:#666;">Details</div><svg class="a" style="left:2008.00px;top:95.00px;" width="24" height="23" viewBox="0 0 24 23"><rect x="2" y="1" width="7" height="4.5" fill="none" stroke="#666" stroke-width="1.1"/><path d="M9 3.2 C13 3.2 14 6 13 9 M4 10 H7 V15" fill="none" stroke="#666" stroke-width="1.1"/><circle cx="15.5" cy="15.5" r="5" fill="none" stroke="#666" stroke-width="1.1"/><path d="M15.5 12.5 V18.3 M13.5 16.3 L15.5 18.3 L17.5 16.3" fill="none" stroke="#666" stroke-width="1"/></svg><div class="t" style="left:1997.50px;width:46px;text-align:center;top:119.07px;font-size:7px;font-weight:400;color:#666;">Add</div><div class="t" style="left:1990.50px;width:60px;text-align:center;top:128.47px;font-size:7px;font-weight:400;color:#666;">Dependency</div><div class="a" style="left:1643.70px;top:997.80px;width:19.60px;height:19.70px;background:#e2f8fd;border:2px solid #3f88ab;border-radius:2px"></div><div class="t" style="left:1666.70px;top:1001.21px;font-size:10.6px;font-weight:400;color:#505050;transform:scaleX(0.9);transform-origin:0 0;">Initial</div><svg class="a" style="left:1716.30px;top:997.50px;" width="20.5" height="20.5" viewBox="0 0 20.5 20.5"><path d="M0.8 7.5 L8 4 L15.3 8 V15.6 L8 19.5 L0.8 15.8 Z" fill="#f39200" stroke="#5e3c00" stroke-width="1.2" stroke-linejoin="round"/><path d="M0.8 7.5 L8 11.5 L15.3 8 M8 11.5 V19.5 M4.4 5.8 L11.6 9.8" fill="none" stroke="#6a4400" stroke-width="1.1"/><circle cx="15" cy="5.7" r="5.1" fill="#13884a" stroke="#0b5e30" stroke-width="0.7"/><path d="M12.4 6 L14.3 8.1 L17.8 3.8" fill="none" stroke="#b6e6c8" stroke-width="1.5"/></svg><div class="t" style="left:1740.20px;top:1001.21px;font-size:10.6px;font-weight:400;color:#505050;transform:scaleX(0.9);transform-origin:0 0;">Produced</div><div class="a" style="left:1807.60px;top:998.00px;width:18.60px;height:18.40px;background:#3a8db1;border:1.4px solid #2d3b42"></div><svg class="a" style="left:1807.60px;top:998.00px;" width="18.6" height="18.4" viewBox="0 0 18.6 18.4"><path d="M4.2 14.6 L11.2 7.6" stroke="#fff" stroke-width="2.6" stroke-linecap="round"/><circle cx="12.6" cy="6.2" r="3.4" fill="#fff"/><path d="M13 2.2 L16.6 5.8 L14.2 7 L12 4.8 Z" fill="#3a8db1"/></svg><div class="t" style="left:1830.80px;top:1001.21px;font-size:10.6px;font-weight:400;color:#505050;transform:scaleX(0.9);transform-origin:0 0;">Reworked</div><svg class="a" style="left:1900.30px;top:997.40px;" width="20" height="21" viewBox="0 0 20 21"><rect x="1" y="1" width="17.8" height="18.8" rx="1.5" fill="#fff" stroke="#e53935" stroke-width="2"/><path d="M3.2 5.8 H16.6" stroke="#e53935" stroke-width="1.6"/><path d="M7.4 5.2 V3.8 H12.4 V5.2" fill="none" stroke="#e53935" stroke-width="1"/><path d="M4.3 6.9 L5.2 16.4 H14.6 L15.5 6.9" fill="none" stroke="#e53935" stroke-width="1.4"/><path d="M7.4 8.6 V14.4 M9.9 8.6 V14.4 M12.4 8.6 V14.4" stroke="#e53935" stroke-width="1.2"/></svg><div class="t" style="left:1923.10px;top:1001.21px;font-size:10.6px;font-weight:400;color:#505050;transform:scaleX(0.9);transform-origin:0 0;">Scrapped</div></div></body></html>
